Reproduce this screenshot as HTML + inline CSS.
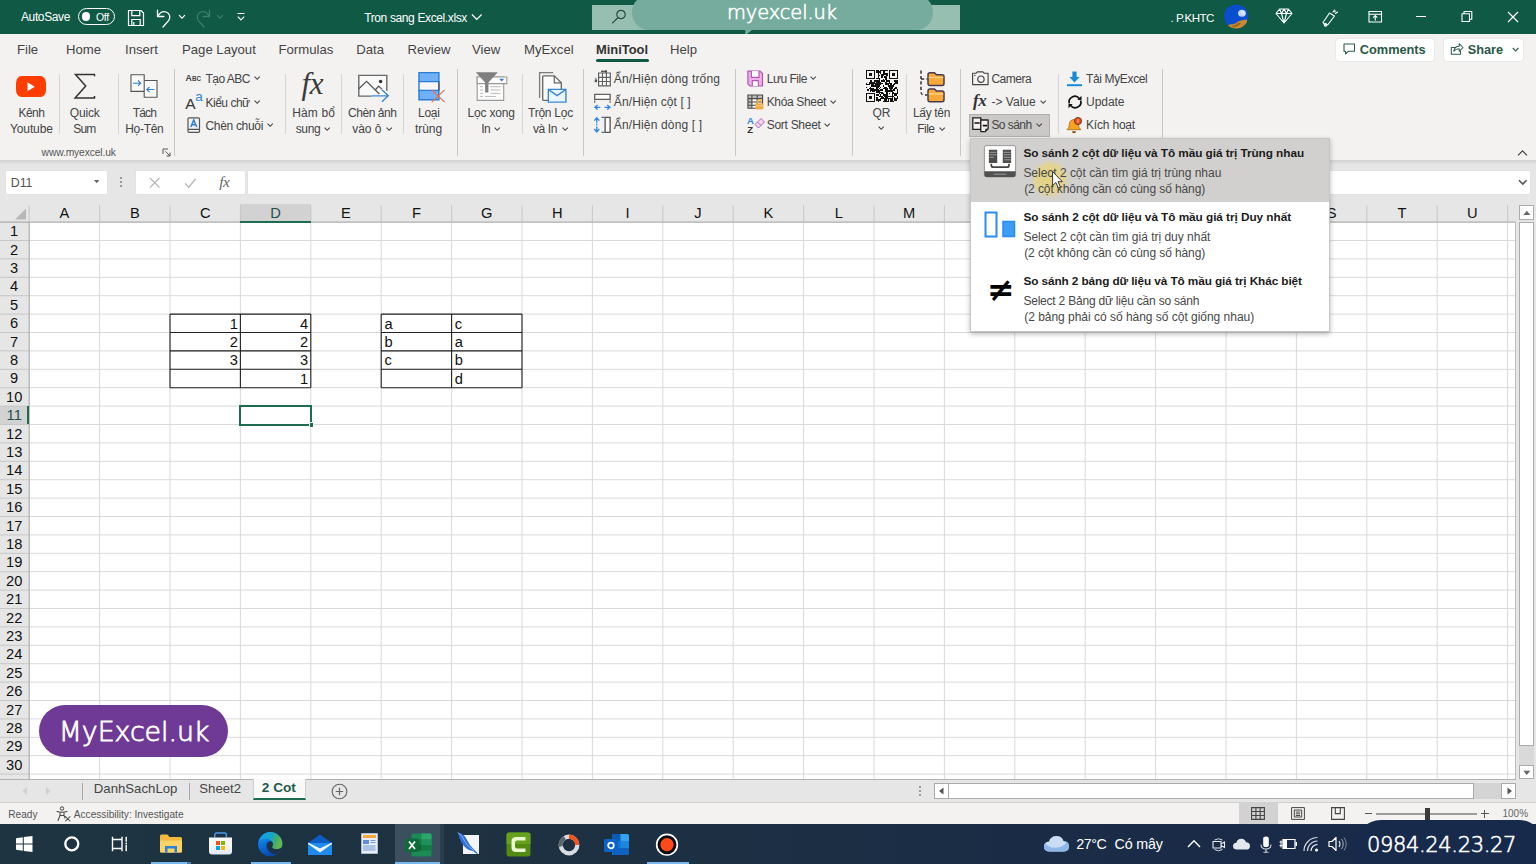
<!DOCTYPE html>
<html lang="vi"><head><meta charset="utf-8"><title>Tron sang Excel.xlsx - Excel</title>
<style>
*{box-sizing:border-box;margin:0;padding:0}
html,body{width:1536px;height:864px;overflow:hidden;background:#fff}
body{font-family:"Liberation Sans",sans-serif;position:relative;color:#333}
.a{position:absolute;white-space:nowrap}
.t{position:absolute;white-space:nowrap;line-height:1}
svg{position:absolute;overflow:visible}
</style></head>
<body>
<div class="a" style="left:0px;top:0px;width:1536px;height:34px;background:#0f5945;"></div>
<div class="t" style="left:21px;top:9.2px;height:16px;line-height:16px;font-size:12px;color:#fff;letter-spacing:-0.380px;">AutoSave</div>
<div class="a" style="left:78px;top:8px;width:37px;height:17px;border:1.2px solid #fff;border-radius:9px"></div>
<div class="a" style="left:81.5px;top:12.3px;width:8.4px;height:8.4px;border-radius:50%;background:#fff"></div>
<div class="t" style="left:96px;top:9.8px;height:14px;line-height:14px;font-size:10.5px;color:#fff;letter-spacing:-0.3px;">Off</div>
<svg style="left:127px;top:9px;" width="18" height="18" viewBox="0 0 18 18"><path d="M1.5 1.5h12.5l2.5 2.5v12.5h-15z M4.8 1.5v5.2h8v-5.2 M4.8 16.5v-6h8.4v6 M6.8 16.5v-3.5" fill="none" stroke="#fff" stroke-width="1.2"/></svg>
<svg style="left:155px;top:8px;" width="18" height="20" viewBox="0 0 18 20"><path d="M2.5 2.2v6.3h6.3 M2.8 8.3c2-3.6 5.3-5.5 8.4-4.3c3.6 1.4 4.7 5.6 2.4 8.600l-5.600 6.4" fill="none" stroke="#fff" stroke-width="1.3" stroke-linecap="round" stroke-linejoin="round"/></svg>
<svg style="left:178px;top:14px;" width="8" height="6" viewBox="0 0 8 6"><path d="M1 1.2l3 3l3-3" fill="none" stroke="#fff" stroke-width="1.2"/></svg>
<svg style="left:194px;top:8px;" width="18" height="20" viewBox="0 0 18 20"><path d="M15.500 2.2v6.3h-6.3 M15.200 8.300c-2-3.600-5.300-5.500-8.400-4.300c-3.600 1.400-4.700 5.600-2.400 8.600l5.600 6.4" fill="none" stroke="#3f7c69" stroke-width="1.3" stroke-linecap="round" stroke-linejoin="round"/></svg>
<svg style="left:216px;top:14px;" width="8" height="6" viewBox="0 0 8 6"><path d="M1 1.2l3 3l3-3" fill="none" stroke="#3f7c69" stroke-width="1.2"/></svg>
<svg style="left:236px;top:12px;" width="10" height="10" viewBox="0 0 10 10"><path d="M1.500 1.500h7 M1.800 4.600l3.200 3.200l3.200-3.200" fill="none" stroke="#fff" stroke-width="1.2"/></svg>
<div class="t" style="left:364.2px;top:9.6px;height:16px;line-height:16px;font-size:12px;color:#fff;letter-spacing:-0.373px;">Tron sang Excel.xlsx</div>
<svg style="left:471px;top:13px;" width="12" height="8" viewBox="0 0 12 8"><path d="M1 1.5l4.800 4.800l4.800-4.800" fill="none" stroke="#fff" stroke-width="1.2"/></svg>
<div class="a" style="left:592px;top:5px;width:368px;height:24.5px;background:#96bfb2;"></div>
<svg style="left:610px;top:8px;" width="18" height="18" viewBox="0 0 18 18"><circle cx="11" cy="6.500" r="4.200" fill="none" stroke="#2d4a42" stroke-width="1.2"/><path d="M8 9.600l-5.800 5.800" stroke="#2d4a42" stroke-width="1.300" fill="none"/></svg>
<div class="a" style="left:632px;top:-5px;width:301px;height:34.5px;border-radius:17px;background:#76ac9d"></div>
<svg style="left:743px;top:28px;" width="12" height="8" viewBox="0 0 12 8"><path d="M2.500 0h9l-9.500 7.500z" fill="#76ac9d"/></svg>
<div class="t" style="left:727px;top:0.0px;height:25px;line-height:25px;font-size:19.4px;color:#fff;font-weight:200;letter-spacing:-0.080px;font-family:'DejaVu Sans','Liberation Sans',sans-serif;-webkit-text-stroke:0.600px #fff;">myexcel.uk</div>
<div class="t" style="left:1170.6px;top:9.8px;height:15px;line-height:15px;font-size:11.6px;color:#fff;letter-spacing:-0.511px;">. P.KHTC</div>
<svg style="left:1224px;top:4.1px;" width="24.4" height="25" viewBox="0 0 24.4 25"><defs><clipPath id="avc"><circle cx="12.200" cy="12.500" r="12.100"/></clipPath></defs><g clip-path="url(#avc)"><rect width="24.400" height="25" fill="#0a4ed0"/><ellipse cx="18" cy="9.200" rx="3.900" ry="3.500" fill="#bcd6f4"/><ellipse cx="18.800" cy="8.800" rx="2.200" ry="2" fill="#dce9fa"/><path d="M3 21.500q3-1.500 6-1.300q3-0.700 5-2.700q3-1.700 9-2v10h-20z" fill="#c98a2e"/><path d="M8 22q4-0.500 7-3.500l2 1q-3 3-8 4z" fill="#9a6418"/></g></svg>
<svg style="left:1275px;top:8.2px;" width="18" height="16" viewBox="0 0 18 16"><path d="M4.500 1h9l3.500 4.500l-8 9.500l-8-9.500z M1 5.500h16 M6.500 5.500l2.500 9.500l2.500-9.500 M4.500 1l2 4.500l2.500-4.500l2.500 4.500l2-4.500" fill="none" stroke="#fff" stroke-width="1.100" stroke-linejoin="round"/></svg>
<svg style="left:1321px;top:8px;" width="18" height="18" viewBox="0 0 18 18"><path d="M2 14.500l6.500-9.500l5 3l-6.500 8.500q-3 1.500-5-2z M4.500 15.500a1.300 1.300 0 1 0 0.100 0 M12 4l1.500-2 M14.500 5.500l2-1.500 M13.800 3.800l0.600-0.600" fill="none" stroke="#fff" stroke-width="1.100" stroke-linejoin="round" stroke-linecap="round"/></svg>
<svg style="left:1368px;top:10px;" width="15" height="13" viewBox="0 0 15 13"><path d="M1 1.500h12.500v10.500h-12.500z M1 4.200h12.500 M7.250 10.500v-4.600 M5.200 7.700l2.050-2.100l2.050 2.100" fill="none" stroke="#fff" stroke-width="1.100"/></svg>
<div class="a" style="left:1416px;top:16px;width:10px;height:1.2px;background:#fff;"></div>
<svg style="left:1461px;top:10px;" width="12" height="13" viewBox="0 0 12 13"><path d="M1 3.800h7.500v7.700h-7.500z M3 3.500v-2h7.800v7.800h-2" fill="none" stroke="#fff" stroke-width="1.100" stroke-linejoin="round"/></svg>
<svg style="left:1507px;top:11px;" width="12" height="12" viewBox="0 0 12 12"><path d="M1 1l10 10 M11 1l-10 10" stroke="#fff" stroke-width="1.200" fill="none"/></svg>
<div class="a" style="left:0px;top:34px;width:1536px;height:126px;background:#f3f2f1;"></div>
<div class="t" style="left:17px;top:41.1px;height:17px;line-height:17px;font-size:13.15px;color:#444;">File</div>
<div class="t" style="left:66px;top:41.1px;height:17px;line-height:17px;font-size:13.15px;color:#444;">Home</div>
<div class="t" style="left:125px;top:41.1px;height:17px;line-height:17px;font-size:13.15px;color:#444;">Insert</div>
<div class="t" style="left:182px;top:41.1px;height:17px;line-height:17px;font-size:13.15px;color:#444;">Page Layout</div>
<div class="t" style="left:278.5px;top:41.1px;height:17px;line-height:17px;font-size:13.15px;color:#444;">Formulas</div>
<div class="t" style="left:356.3px;top:41.1px;height:17px;line-height:17px;font-size:13.15px;color:#444;">Data</div>
<div class="t" style="left:407.5px;top:41.1px;height:17px;line-height:17px;font-size:13.15px;color:#444;">Review</div>
<div class="t" style="left:472px;top:41.1px;height:17px;line-height:17px;font-size:13.15px;color:#444;">View</div>
<div class="t" style="left:524px;top:41.1px;height:17px;line-height:17px;font-size:13.15px;color:#444;">MyExcel</div>
<div class="t" style="left:670px;top:41.1px;height:17px;line-height:17px;font-size:13.15px;color:#444;">Help</div>
<div class="t" style="left:596px;top:41.1px;height:17px;line-height:17px;font-size:12.9px;color:#333;font-weight:bold;">MiniTool</div>
<div class="a" style="left:596px;top:59.3px;width:52.6px;height:3.2px;background:#0f5945;border-radius:1.500px;"></div>
<div class="a" style="left:1336px;top:38.500px;width:98.300px;height:22.500px;background:#fff;border-radius:3px;box-shadow:0 0 1.500px rgba(0,0,0,.18)"></div>
<svg style="left:1343px;top:43px;" width="13" height="12" viewBox="0 0 13 12"><path d="M1 1h10.500v7.300h-6.300l-2.700 2.700v-2.700h-1.500z" fill="none" stroke="#2f5d4f" stroke-width="1.100" stroke-linejoin="round"/></svg>
<div class="t" style="left:1359.8px;top:41.3px;height:17px;line-height:17px;font-size:12.75px;color:#2a5748;font-weight:bold;">Comments</div>
<div class="a" style="left:1443.800px;top:38.500px;width:79.500px;height:22.500px;background:#fff;border-radius:3px;box-shadow:0 0 1.500px rgba(0,0,0,.18)"></div>
<svg style="left:1450px;top:42px;" width="14" height="13" viewBox="0 0 14 13"><path d="M5 5.500h-3.700v6.800h9.200v-3.300 M3.800 9.300c0.400-3.300 2.500-5 5.400-5v-2.600l3.800 3.800l-3.800 3.800v-2.600c-2.500 0-4 0.700-5.400 2.600z" fill="none" stroke="#2f5d4f" stroke-width="1.050" stroke-linejoin="round"/></svg>
<div class="t" style="left:1467.7px;top:41.3px;height:17px;line-height:17px;font-size:12.75px;color:#2a5748;font-weight:bold;">Share</div>
<svg style="left:1512px;top:47px;" width="8" height="6" viewBox="0 0 8 6"><path d="M0.800 1l2.800 2.800l2.800-2.800" fill="none" stroke="#2f5d4f" stroke-width="1.200"/></svg>
<div class="a" style="left:58.5px;top:74px;width:1px;height:59.5px;background:#d6d4d2;"></div>
<div class="a" style="left:117.8px;top:74px;width:1px;height:59.5px;background:#d6d4d2;"></div>
<div class="a" style="left:285.1px;top:74px;width:1px;height:59.5px;background:#d6d4d2;"></div>
<div class="a" style="left:341.1px;top:74px;width:1px;height:59.5px;background:#d6d4d2;"></div>
<div class="a" style="left:402.9px;top:74px;width:1px;height:59.5px;background:#d6d4d2;"></div>
<div class="a" style="left:521.5px;top:74px;width:1px;height:59.5px;background:#d6d4d2;"></div>
<div class="a" style="left:905.8px;top:74px;width:1px;height:59.5px;background:#d6d4d2;"></div>
<div class="a" style="left:1057.8px;top:74px;width:1px;height:59.5px;background:#d6d4d2;"></div>
<div class="a" style="left:173.7px;top:69px;width:1px;height:87px;background:#c9c7c5;"></div>
<div class="a" style="left:456.9px;top:69px;width:1px;height:87px;background:#c9c7c5;"></div>
<div class="a" style="left:582.5px;top:69px;width:1px;height:87px;background:#c9c7c5;"></div>
<div class="a" style="left:735.0px;top:69px;width:1px;height:87px;background:#c9c7c5;"></div>
<div class="a" style="left:851.9px;top:69px;width:1px;height:87px;background:#c9c7c5;"></div>
<div class="a" style="left:960.0px;top:69px;width:1px;height:87px;background:#c9c7c5;"></div>
<div class="a" style="left:1161.7px;top:69px;width:1px;height:87px;background:#c9c7c5;"></div>
<div class="a" style="left:15.800px;top:76px;width:30.400px;height:21.200px;border-radius:5.500px/7px;background:#ff3d00"></div>
<svg style="left:27px;top:81.5px;" width="9" height="10" viewBox="0 0 9 10"><path d="M0.500 0.300l7.300 4.500l-7.300 4.500z" fill="#fff"/></svg>
<div class="t" style="left:18.5px;top:104.9px;height:16px;line-height:16px;font-size:12.0px;color:#444;letter-spacing:-0.532px;">Kênh</div>
<div class="t" style="left:10px;top:120.6px;height:16px;line-height:16px;font-size:12.0px;color:#444;letter-spacing:-0.115px;">Youtube</div>
<svg style="left:74px;top:73px;" width="22" height="26" viewBox="0 0 22 26"><path d="M20.500 3.200v-1.700h-19l10.200 11.400l-10.600 12.100h19.400v-2" fill="none" stroke="#333" stroke-width="1.500" stroke-linejoin="miter"/></svg>
<div class="t" style="left:69.8px;top:104.9px;height:16px;line-height:16px;font-size:12.0px;color:#444;letter-spacing:-0.195px;">Quick</div>
<div class="t" style="left:73.3px;top:120.6px;height:16px;line-height:16px;font-size:12.0px;color:#444;letter-spacing:-0.825px;">Sum</div>
<svg style="left:130px;top:74px;" width="28" height="25" viewBox="0 0 28 25"><path d="M1 0.800h13.200v16.600h-13.200z M14.200 6.500h12.800v16.800h-12.800v-5.900" fill="#fafafa" stroke="#555" stroke-width="1.100"/><path d="M3 9.200h7.500 M8 6.500l2.700 2.700l-2.700 2.700" fill="none" stroke="#2e7fd0" stroke-width="1.100"/><path d="M24.500 15.500h-7.500 M19.500 12.800l-2.700 2.700l2.700 2.700" fill="none" stroke="#2e7fd0" stroke-width="1.100"/></svg>
<div class="t" style="left:132.8px;top:104.9px;height:16px;line-height:16px;font-size:12.0px;color:#444;letter-spacing:-0.870px;">Tách</div>
<div class="t" style="left:125.2px;top:120.6px;height:16px;line-height:16px;font-size:12.0px;color:#444;letter-spacing:-0.286px;">Họ-Tên</div>
<div class="t" style="left:41.6px;top:146.2px;height:13px;line-height:13px;font-size:10.3px;color:#555;letter-spacing:-0.138px;">www.myexcel.uk</div>
<svg style="left:162px;top:148px;" width="9" height="9" viewBox="0 0 9 9"><path d="M1 6v-5h5 M3.300 3.300l4.700 4.700 M8 4.500v3.500h-3.500" fill="none" stroke="#555" stroke-width="1"/></svg>
<div class="t" style="left:185.5px;top:73.1px;height:11px;line-height:11px;font-size:8.8px;color:#444;font-weight:bold;letter-spacing:0.1px;">A<span style="font-size:6.300px">BC</span></div>
<div class="t" style="left:205.5px;top:70.8px;height:16px;line-height:16px;font-size:12.0px;color:#444;letter-spacing:-0.504px;">Tạo ABC</div>
<svg style="left:254.2px;top:76.39999999999999px;" width="6.4" height="4.6" viewBox="0 0 6.4 4.6"><path d="M0.600 0.700l2.600 2.600l2.600-2.600" fill="none" stroke="#444" stroke-width="1.150"/></svg>
<div class="t" style="left:185.3px;top:94.0px;height:20px;line-height:20px;font-size:15.5px;color:#333;">A</div>
<div class="t" style="left:195.3px;top:88.0px;height:18px;line-height:18px;font-size:13.5px;color:#2e86de;">a</div>
<div class="t" style="left:205.5px;top:94.5px;height:16px;line-height:16px;font-size:12.0px;color:#444;letter-spacing:-0.495px;">Kiểu chữ</div>
<svg style="left:254.2px;top:99.8px;" width="6.4" height="4.6" viewBox="0 0 6.4 4.6"><path d="M0.600 0.700l2.600 2.600l2.600-2.600" fill="none" stroke="#444" stroke-width="1.150"/></svg>
<svg style="left:187px;top:117px;" width="14" height="16" viewBox="0 0 14 16"><path d="M2 0.800h9.500q1 0 1 1v12.500q0 1-1 1h-9.500q-1 0-1-1v-12.500q0-1 1-1z M1 12.300h11.500" fill="none" stroke="#555" stroke-width="1.200"/><path d="M3.800 10l2.950-7l2.950 7 M4.800 7.700h3.900" fill="none" stroke="#2e7fd0" stroke-width="1.500"/></svg>
<div class="t" style="left:205.5px;top:117.8px;height:16px;line-height:16px;font-size:12.0px;color:#444;letter-spacing:-0.321px;">Chèn chuỗi</div>
<svg style="left:267.3px;top:123.3px;" width="6.4" height="4.6" viewBox="0 0 6.4 4.6"><path d="M0.600 0.700l2.600 2.600l2.600-2.600" fill="none" stroke="#444" stroke-width="1.150"/></svg>
<div class="t" style="left:301.5px;top:64.3px;height:40px;line-height:40px;font-size:31px;color:#3a3a3a;font-family:'Liberation Serif',serif;font-style:italic;letter-spacing:-0.3px;">fx</div>
<div class="t" style="left:292.2px;top:104.9px;height:16px;line-height:16px;font-size:12.0px;color:#444;letter-spacing:0.130px;">Hàm bổ</div>
<div class="t" style="left:295.7px;top:120.6px;height:16px;line-height:16px;font-size:12.0px;color:#444;letter-spacing:-0.331px;">sung</div>
<svg style="left:324.3px;top:126.7px;" width="6.4" height="4.6" viewBox="0 0 6.4 4.6"><path d="M0.600 0.700l2.600 2.600l2.600-2.600" fill="none" stroke="#444" stroke-width="1.150"/></svg>
<svg style="left:358px;top:74px;" width="32" height="29" viewBox="0 0 32 29"><path d="M0.800 1.400h28v20.700h-28z" fill="#f9f9f9"/><path d="M13.500 22.100h-12.700v-20.700h28v15.300" fill="none" stroke="#686868" stroke-width="1.400"/><path d="M0.800 14.800l7.800-7.500l12.700 12.700 M17.700 15.500l2.900-3.300l3.300 2.900" fill="none" stroke="#555" stroke-width="1.250"/><circle cx="22.600" cy="7.400" r="1.750" fill="#333"/><path d="M13.500 21.800h16.500 M23.900 15.800l6.400 6l-6.400 6" fill="none" stroke="#3b86d6" stroke-width="1.350"/></svg>
<div class="t" style="left:348px;top:104.9px;height:16px;line-height:16px;font-size:12.0px;color:#444;letter-spacing:-0.443px;">Chèn ảnh</div>
<div class="t" style="left:352.3px;top:120.6px;height:16px;line-height:16px;font-size:12.0px;color:#444;letter-spacing:-0.071px;">vào ô</div>
<svg style="left:385.8px;top:126.7px;" width="6.4" height="4.6" viewBox="0 0 6.4 4.6"><path d="M0.600 0.700l2.600 2.600l2.600-2.600" fill="none" stroke="#444" stroke-width="1.150"/></svg>
<svg style="left:418px;top:72px;" width="28" height="31" viewBox="0 0 28 31"><path d="M1 0.600h19.900v9h-19.900z M1 18.400h19.900v9.400h-19.900z" fill="#70b0f7" stroke="#2a7bd4" stroke-width="1.400"/><path d="M1 9.600h19.900v8.800h-19.900z" fill="#f6f6f6" stroke="#2a7bd4" stroke-width="1.400"/><path d="M20.900 10.300v7.600" stroke="#5a5a5a" stroke-width="1.400"/><path d="M13.700 17.800l13 12.300 M26.700 17.800l-13 12.300" stroke="#e8704a" stroke-width="1.150" fill="none"/></svg>
<div class="t" style="left:418px;top:104.9px;height:16px;line-height:16px;font-size:12.0px;color:#444;letter-spacing:-0.297px;">Loại</div>
<div class="t" style="left:415px;top:120.6px;height:16px;line-height:16px;font-size:12.0px;color:#444;letter-spacing:-0.070px;">trùng</div>
<svg style="left:475px;top:71px;" width="33" height="31" viewBox="0 0 33 31"><path d="M2.200 6h26.500v23.400h-26.500z" fill="#fcfcfc" stroke="#9a9a9a" stroke-width="1.100"/><path d="M2.200 6h29.600v6.600h-29.600z" fill="#fcfcfc" stroke="#9a9a9a" stroke-width="1.100"/><path d="M24.200 7.800h5l-2.500 2.700z" fill="#3f78c9"/><path d="M5 15.700h3 M5 19h3 M5 22.400h3 M5 25.400h3 M15.500 15.700h10 M15.500 19h10 M15.500 22.400h10 M10 25.400h11" stroke="#b9b9b9" stroke-width="1" fill="none"/><path d="M0.800 1.200h22l-9.400 10.300v10.100h-3.300v-10.100z" fill="#7f7f7f"/></svg>
<div class="t" style="left:467.5px;top:104.9px;height:16px;line-height:16px;font-size:12.0px;color:#444;letter-spacing:-0.188px;">Lọc xong</div>
<div class="t" style="left:481.3px;top:120.6px;height:16px;line-height:16px;font-size:12.0px;color:#444;letter-spacing:-0.654px;">In</div>
<svg style="left:494.4px;top:126.7px;" width="6.4" height="4.6" viewBox="0 0 6.4 4.6"><path d="M0.600 0.700l2.600 2.600l2.600-2.600" fill="none" stroke="#444" stroke-width="1.150"/></svg>
<svg style="left:538px;top:71px;" width="30" height="33" viewBox="0 0 30 33"><path d="M15.300 1.600h-13.700v25.400" fill="none" stroke="#7c7c7c" stroke-width="1.300"/><path d="M5.700 4.800h10.600l7 7v16.600q0 1-1 1h-16.600q-1 0-1-1v-22.600q0-1 1-1z" fill="#fbfbfb" stroke="#686868" stroke-width="1.350"/><path d="M16.300 4.800v7h7" fill="none" stroke="#686868" stroke-width="1.250"/><path d="M10.300 18.400h17.600v12.700h-17.600z" fill="#eaf6ff" stroke="#3a86d0" stroke-width="1.400"/><path d="M10.300 18.400l8.800 6.200l8.800-6.200" fill="none" stroke="#3a86d0" stroke-width="1.400"/></svg>
<div class="t" style="left:528px;top:104.9px;height:16px;line-height:16px;font-size:12.0px;color:#444;letter-spacing:-0.251px;">Trộn Lọc</div>
<div class="t" style="left:533px;top:120.6px;height:16px;line-height:16px;font-size:12.0px;color:#444;letter-spacing:-0.403px;">và In</div>
<svg style="left:561.6px;top:126.7px;" width="6.4" height="4.6" viewBox="0 0 6.4 4.6"><path d="M0.600 0.700l2.600 2.600l2.600-2.600" fill="none" stroke="#444" stroke-width="1.150"/></svg>
<svg style="left:593px;top:70px;" width="18" height="17" viewBox="0 0 18 17"><path d="M5.600 3h11.700v12.800h-11.700z" fill="#fdfdfd" stroke="#606060" stroke-width="1.200"/><path d="M5.600 7.300h11.700 M5.600 11.500h11.700 M9.500 3v12.800 M13.400 3v12.800" fill="none" stroke="#606060" stroke-width="1.150"/><path d="M8 1.400h6" stroke="#555" stroke-width="1.500"/><path d="M12 0.400h2v2h-2z" fill="#444"/><path d="M1.700 9.400h2.400v2.800h-2.400z" fill="#555"/><path d="M2.200 8.300h1.200" stroke="#555" stroke-width=".9"/></svg>
<div class="t" style="left:613.8px;top:70.6px;height:16px;line-height:16px;font-size:12.0px;color:#444;letter-spacing:0.161px;">Ẩn/Hiện dòng trống</div>
<svg style="left:593px;top:92px;" width="18" height="19" viewBox="0 0 18 19"><path d="M1.700 2.300h15.400v5h-15.400z" fill="#fdfdfd" stroke="#606060" stroke-width="1.300"/><path d="M1.700 8.300v2.600 M17.100 8.300v2.600" stroke="#777" stroke-width="1.200"/><path d="M2 15.300h5.300 M4.600 13l-2.700 2.300l2.700 2.300 M16.800 15.300h-5.300 M14.200 13l2.700 2.300l-2.700 2.300" fill="none" stroke="#2e86de" stroke-width="1.300"/></svg>
<div class="t" style="left:613.8px;top:93.9px;height:16px;line-height:16px;font-size:12.0px;color:#444;letter-spacing:0.109px;">Ẩn/Hiện cột [ ]</div>
<svg style="left:593px;top:116px;" width="18" height="19" viewBox="0 0 18 19"><path d="M12.100 1.300h5v15h-5z" fill="#fdfdfd" stroke="#555" stroke-width="1.350"/><path d="M8.500 1.300h3 M8.500 16.300h3" stroke="#666" stroke-width="1.200"/><path d="M3.800 2.300v4.500 M3.800 10.500v4.800 M1.300 4.700l2.500-2.900l2.500 2.900 M1.300 13l2.500 2.900l2.500-2.900" fill="none" stroke="#2e86de" stroke-width="1.300"/><path d="M3.800 7.600v2" stroke="#2e86de" stroke-width="1.200"/></svg>
<div class="t" style="left:613.8px;top:117.1px;height:16px;line-height:16px;font-size:12.0px;color:#444;letter-spacing:0.146px;">Ẩn/Hiện dòng [ ]</div>
<svg style="left:747px;top:70px;" width="17" height="17" viewBox="0 0 17 17"><path d="M0.900 1.100h12.200l2.400 2.400v12.500h-12.400l-2.200-2.200z" fill="#eab0e8" stroke="#b556b2" stroke-width="1.200" stroke-linejoin="round"/><path d="M4.400 1.100v6.300h7.600v-6.300" fill="#fff" stroke="#b556b2" stroke-width="1.100"/><path d="M5.300 16v-5.400h6v5.400" fill="#fff" stroke="#b556b2" stroke-width="1.100"/></svg>
<div class="t" style="left:766.7px;top:70.5px;height:16px;line-height:16px;font-size:12.0px;color:#444;letter-spacing:-0.482px;">Lưu File</div>
<svg style="left:810.4px;top:76.39999999999999px;" width="6.4" height="4.6" viewBox="0 0 6.4 4.6"><path d="M0.600 0.700l2.600 2.600l2.600-2.600" fill="none" stroke="#444" stroke-width="1.150"/></svg>
<svg style="left:747px;top:93px;" width="18" height="18" viewBox="0 0 18 18"><path d="M0.900 2h14.700v13.300h-14.700z" fill="#fbfbfb"/><path d="M0.900 2h14.700v3.600h-14.700z M0.900 2h4v13.300h-4z" fill="#bdbdbd"/><path d="M0.900 2h14.700v13.300h-14.700z M0.900 5.600h14.700 M0.900 9h14.700 M0.900 12.300h14.700 M4.900 2v13.300 M10.200 2v13.300" fill="none" stroke="#4a4a4a" stroke-width="1.100"/><path d="M8.600 10.400h7.400v6h-7.400z" fill="#f5a93b"/><path d="M10.300 10.400v-1.700a2 2 0 0 1 4 0v1.700" fill="none" stroke="#f5a93b" stroke-width="1.400"/><path d="M8.600 12.800h7.400" stroke="#fbd08a" stroke-width=".9"/></svg>
<div class="t" style="left:766.7px;top:93.8px;height:16px;line-height:16px;font-size:12.0px;color:#444;letter-spacing:-0.342px;">Khóa Sheet</div>
<svg style="left:829.8px;top:99.8px;" width="6.4" height="4.6" viewBox="0 0 6.4 4.6"><path d="M0.600 0.700l2.600 2.600l2.600-2.600" fill="none" stroke="#444" stroke-width="1.150"/></svg>
<div class="t" style="left:747px;top:114.6px;height:12px;line-height:12px;font-size:9.5px;color:#2e86de;font-weight:bold;">A</div>
<div class="t" style="left:747.2px;top:123.8px;height:12px;line-height:12px;font-size:9.5px;color:#333;font-weight:bold;">Z</div>
<svg style="left:754px;top:117px;" width="12" height="12" viewBox="0 0 12 12"><path d="M1 7.500l6-6l3.500 3.500l-6 6z" fill="#f3d4ee" stroke="#b36bb3" stroke-width="1"/><path d="M3.500 5l3.500 3.500" stroke="#b36bb3" stroke-width="1"/></svg>
<div class="t" style="left:766.7px;top:117.1px;height:16px;line-height:16px;font-size:12.0px;color:#444;letter-spacing:-0.280px;">Sort Sheet</div>
<svg style="left:824.3px;top:123.2px;" width="6.4" height="4.6" viewBox="0 0 6.4 4.6"><path d="M0.600 0.700l2.600 2.600l2.600-2.600" fill="none" stroke="#444" stroke-width="1.150"/></svg>
<svg style="left:865.5px;top:70.2px;" width="32" height="32" viewBox="0 0 32 32"><g shape-rendering="crispEdges"><rect x="10.24" y="0.00" width="1.33" height="1.33" fill="#111"/><rect x="11.52" y="0.00" width="1.33" height="1.33" fill="#111"/><rect x="14.08" y="0.00" width="1.33" height="1.33" fill="#111"/><rect x="15.36" y="0.00" width="1.33" height="1.33" fill="#111"/><rect x="16.64" y="0.00" width="1.33" height="1.33" fill="#111"/><rect x="17.92" y="0.00" width="1.33" height="1.33" fill="#111"/><rect x="19.20" y="0.00" width="1.33" height="1.33" fill="#111"/><rect x="20.48" y="0.00" width="1.33" height="1.33" fill="#111"/><rect x="10.24" y="1.28" width="1.33" height="1.33" fill="#111"/><rect x="11.52" y="1.28" width="1.33" height="1.33" fill="#111"/><rect x="12.80" y="1.28" width="1.33" height="1.33" fill="#111"/><rect x="14.08" y="1.28" width="1.33" height="1.33" fill="#111"/><rect x="16.64" y="1.28" width="1.33" height="1.33" fill="#111"/><rect x="17.92" y="1.28" width="1.33" height="1.33" fill="#111"/><rect x="11.52" y="2.56" width="1.33" height="1.33" fill="#111"/><rect x="14.08" y="2.56" width="1.33" height="1.33" fill="#111"/><rect x="16.64" y="2.56" width="1.33" height="1.33" fill="#111"/><rect x="17.92" y="2.56" width="1.33" height="1.33" fill="#111"/><rect x="19.20" y="2.56" width="1.33" height="1.33" fill="#111"/><rect x="20.48" y="2.56" width="1.33" height="1.33" fill="#111"/><rect x="11.52" y="3.84" width="1.33" height="1.33" fill="#111"/><rect x="15.36" y="3.84" width="1.33" height="1.33" fill="#111"/><rect x="16.64" y="3.84" width="1.33" height="1.33" fill="#111"/><rect x="17.92" y="3.84" width="1.33" height="1.33" fill="#111"/><rect x="19.20" y="3.84" width="1.33" height="1.33" fill="#111"/><rect x="20.48" y="3.84" width="1.33" height="1.33" fill="#111"/><rect x="11.52" y="5.12" width="1.33" height="1.33" fill="#111"/><rect x="12.80" y="5.12" width="1.33" height="1.33" fill="#111"/><rect x="15.36" y="5.12" width="1.33" height="1.33" fill="#111"/><rect x="16.64" y="5.12" width="1.33" height="1.33" fill="#111"/><rect x="20.48" y="5.12" width="1.33" height="1.33" fill="#111"/><rect x="11.52" y="6.40" width="1.33" height="1.33" fill="#111"/><rect x="15.36" y="6.40" width="1.33" height="1.33" fill="#111"/><rect x="17.92" y="6.40" width="1.33" height="1.33" fill="#111"/><rect x="19.20" y="6.40" width="1.33" height="1.33" fill="#111"/><rect x="10.24" y="7.68" width="1.33" height="1.33" fill="#111"/><rect x="11.52" y="7.68" width="1.33" height="1.33" fill="#111"/><rect x="12.80" y="7.68" width="1.33" height="1.33" fill="#111"/><rect x="19.20" y="7.68" width="1.33" height="1.33" fill="#111"/><rect x="12.80" y="8.96" width="1.33" height="1.33" fill="#111"/><rect x="16.64" y="8.96" width="1.33" height="1.33" fill="#111"/><rect x="19.20" y="8.96" width="1.33" height="1.33" fill="#111"/><rect x="3.84" y="10.24" width="1.33" height="1.33" fill="#111"/><rect x="5.12" y="10.24" width="1.33" height="1.33" fill="#111"/><rect x="7.68" y="10.24" width="1.33" height="1.33" fill="#111"/><rect x="8.96" y="10.24" width="1.33" height="1.33" fill="#111"/><rect x="10.24" y="10.24" width="1.33" height="1.33" fill="#111"/><rect x="11.52" y="10.24" width="1.33" height="1.33" fill="#111"/><rect x="12.80" y="10.24" width="1.33" height="1.33" fill="#111"/><rect x="15.36" y="10.24" width="1.33" height="1.33" fill="#111"/><rect x="16.64" y="10.24" width="1.33" height="1.33" fill="#111"/><rect x="17.92" y="10.24" width="1.33" height="1.33" fill="#111"/><rect x="20.48" y="10.24" width="1.33" height="1.33" fill="#111"/><rect x="21.76" y="10.24" width="1.33" height="1.33" fill="#111"/><rect x="23.04" y="10.24" width="1.33" height="1.33" fill="#111"/><rect x="28.16" y="10.24" width="1.33" height="1.33" fill="#111"/><rect x="29.44" y="10.24" width="1.33" height="1.33" fill="#111"/><rect x="30.72" y="10.24" width="1.33" height="1.33" fill="#111"/><rect x="2.56" y="11.52" width="1.33" height="1.33" fill="#111"/><rect x="3.84" y="11.52" width="1.33" height="1.33" fill="#111"/><rect x="5.12" y="11.52" width="1.33" height="1.33" fill="#111"/><rect x="6.40" y="11.52" width="1.33" height="1.33" fill="#111"/><rect x="7.68" y="11.52" width="1.33" height="1.33" fill="#111"/><rect x="10.24" y="11.52" width="1.33" height="1.33" fill="#111"/><rect x="11.52" y="11.52" width="1.33" height="1.33" fill="#111"/><rect x="12.80" y="11.52" width="1.33" height="1.33" fill="#111"/><rect x="14.08" y="11.52" width="1.33" height="1.33" fill="#111"/><rect x="19.20" y="11.52" width="1.33" height="1.33" fill="#111"/><rect x="23.04" y="11.52" width="1.33" height="1.33" fill="#111"/><rect x="29.44" y="11.52" width="1.33" height="1.33" fill="#111"/><rect x="30.72" y="11.52" width="1.33" height="1.33" fill="#111"/><rect x="0.00" y="12.80" width="1.33" height="1.33" fill="#111"/><rect x="2.56" y="12.80" width="1.33" height="1.33" fill="#111"/><rect x="3.84" y="12.80" width="1.33" height="1.33" fill="#111"/><rect x="5.12" y="12.80" width="1.33" height="1.33" fill="#111"/><rect x="6.40" y="12.80" width="1.33" height="1.33" fill="#111"/><rect x="7.68" y="12.80" width="1.33" height="1.33" fill="#111"/><rect x="8.96" y="12.80" width="1.33" height="1.33" fill="#111"/><rect x="10.24" y="12.80" width="1.33" height="1.33" fill="#111"/><rect x="11.52" y="12.80" width="1.33" height="1.33" fill="#111"/><rect x="12.80" y="12.80" width="1.33" height="1.33" fill="#111"/><rect x="14.08" y="12.80" width="1.33" height="1.33" fill="#111"/><rect x="15.36" y="12.80" width="1.33" height="1.33" fill="#111"/><rect x="19.20" y="12.80" width="1.33" height="1.33" fill="#111"/><rect x="20.48" y="12.80" width="1.33" height="1.33" fill="#111"/><rect x="21.76" y="12.80" width="1.33" height="1.33" fill="#111"/><rect x="23.04" y="12.80" width="1.33" height="1.33" fill="#111"/><rect x="24.32" y="12.80" width="1.33" height="1.33" fill="#111"/><rect x="28.16" y="12.80" width="1.33" height="1.33" fill="#111"/><rect x="29.44" y="12.80" width="1.33" height="1.33" fill="#111"/><rect x="30.72" y="12.80" width="1.33" height="1.33" fill="#111"/><rect x="0.00" y="14.08" width="1.33" height="1.33" fill="#111"/><rect x="1.28" y="14.08" width="1.33" height="1.33" fill="#111"/><rect x="2.56" y="14.08" width="1.33" height="1.33" fill="#111"/><rect x="5.12" y="14.08" width="1.33" height="1.33" fill="#111"/><rect x="6.40" y="14.08" width="1.33" height="1.33" fill="#111"/><rect x="8.96" y="14.08" width="1.33" height="1.33" fill="#111"/><rect x="10.24" y="14.08" width="1.33" height="1.33" fill="#111"/><rect x="11.52" y="14.08" width="1.33" height="1.33" fill="#111"/><rect x="12.80" y="14.08" width="1.33" height="1.33" fill="#111"/><rect x="14.08" y="14.08" width="1.33" height="1.33" fill="#111"/><rect x="19.20" y="14.08" width="1.33" height="1.33" fill="#111"/><rect x="20.48" y="14.08" width="1.33" height="1.33" fill="#111"/><rect x="21.76" y="14.08" width="1.33" height="1.33" fill="#111"/><rect x="24.32" y="14.08" width="1.33" height="1.33" fill="#111"/><rect x="26.88" y="14.08" width="1.33" height="1.33" fill="#111"/><rect x="28.16" y="14.08" width="1.33" height="1.33" fill="#111"/><rect x="5.12" y="15.36" width="1.33" height="1.33" fill="#111"/><rect x="6.40" y="15.36" width="1.33" height="1.33" fill="#111"/><rect x="7.68" y="15.36" width="1.33" height="1.33" fill="#111"/><rect x="8.96" y="15.36" width="1.33" height="1.33" fill="#111"/><rect x="10.24" y="15.36" width="1.33" height="1.33" fill="#111"/><rect x="11.52" y="15.36" width="1.33" height="1.33" fill="#111"/><rect x="12.80" y="15.36" width="1.33" height="1.33" fill="#111"/><rect x="16.64" y="15.36" width="1.33" height="1.33" fill="#111"/><rect x="21.76" y="15.36" width="1.33" height="1.33" fill="#111"/><rect x="23.04" y="15.36" width="1.33" height="1.33" fill="#111"/><rect x="24.32" y="15.36" width="1.33" height="1.33" fill="#111"/><rect x="25.60" y="15.36" width="1.33" height="1.33" fill="#111"/><rect x="26.88" y="15.36" width="1.33" height="1.33" fill="#111"/><rect x="0.00" y="16.64" width="1.33" height="1.33" fill="#111"/><rect x="3.84" y="16.64" width="1.33" height="1.33" fill="#111"/><rect x="10.24" y="16.64" width="1.33" height="1.33" fill="#111"/><rect x="11.52" y="16.64" width="1.33" height="1.33" fill="#111"/><rect x="14.08" y="16.64" width="1.33" height="1.33" fill="#111"/><rect x="17.92" y="16.64" width="1.33" height="1.33" fill="#111"/><rect x="19.20" y="16.64" width="1.33" height="1.33" fill="#111"/><rect x="23.04" y="16.64" width="1.33" height="1.33" fill="#111"/><rect x="24.32" y="16.64" width="1.33" height="1.33" fill="#111"/><rect x="25.60" y="16.64" width="1.33" height="1.33" fill="#111"/><rect x="29.44" y="16.64" width="1.33" height="1.33" fill="#111"/><rect x="2.56" y="17.92" width="1.33" height="1.33" fill="#111"/><rect x="3.84" y="17.92" width="1.33" height="1.33" fill="#111"/><rect x="5.12" y="17.92" width="1.33" height="1.33" fill="#111"/><rect x="6.40" y="17.92" width="1.33" height="1.33" fill="#111"/><rect x="10.24" y="17.92" width="1.33" height="1.33" fill="#111"/><rect x="12.80" y="17.92" width="1.33" height="1.33" fill="#111"/><rect x="16.64" y="17.92" width="1.33" height="1.33" fill="#111"/><rect x="17.92" y="17.92" width="1.33" height="1.33" fill="#111"/><rect x="19.20" y="17.92" width="1.33" height="1.33" fill="#111"/><rect x="20.48" y="17.92" width="1.33" height="1.33" fill="#111"/><rect x="23.04" y="17.92" width="1.33" height="1.33" fill="#111"/><rect x="24.32" y="17.92" width="1.33" height="1.33" fill="#111"/><rect x="25.60" y="17.92" width="1.33" height="1.33" fill="#111"/><rect x="28.16" y="17.92" width="1.33" height="1.33" fill="#111"/><rect x="29.44" y="17.92" width="1.33" height="1.33" fill="#111"/><rect x="1.28" y="19.20" width="1.33" height="1.33" fill="#111"/><rect x="3.84" y="19.20" width="1.33" height="1.33" fill="#111"/><rect x="5.12" y="19.20" width="1.33" height="1.33" fill="#111"/><rect x="6.40" y="19.20" width="1.33" height="1.33" fill="#111"/><rect x="7.68" y="19.20" width="1.33" height="1.33" fill="#111"/><rect x="8.96" y="19.20" width="1.33" height="1.33" fill="#111"/><rect x="10.24" y="19.20" width="1.33" height="1.33" fill="#111"/><rect x="11.52" y="19.20" width="1.33" height="1.33" fill="#111"/><rect x="14.08" y="19.20" width="1.33" height="1.33" fill="#111"/><rect x="15.36" y="19.20" width="1.33" height="1.33" fill="#111"/><rect x="19.20" y="19.20" width="1.33" height="1.33" fill="#111"/><rect x="20.48" y="19.20" width="1.33" height="1.33" fill="#111"/><rect x="24.32" y="19.20" width="1.33" height="1.33" fill="#111"/><rect x="26.88" y="19.20" width="1.33" height="1.33" fill="#111"/><rect x="28.16" y="19.20" width="1.33" height="1.33" fill="#111"/><rect x="30.72" y="19.20" width="1.33" height="1.33" fill="#111"/><rect x="3.84" y="20.48" width="1.33" height="1.33" fill="#111"/><rect x="6.40" y="20.48" width="1.33" height="1.33" fill="#111"/><rect x="7.68" y="20.48" width="1.33" height="1.33" fill="#111"/><rect x="10.24" y="20.48" width="1.33" height="1.33" fill="#111"/><rect x="11.52" y="20.48" width="1.33" height="1.33" fill="#111"/><rect x="12.80" y="20.48" width="1.33" height="1.33" fill="#111"/><rect x="19.20" y="20.48" width="1.33" height="1.33" fill="#111"/><rect x="30.72" y="20.48" width="1.33" height="1.33" fill="#111"/><rect x="10.24" y="21.76" width="1.33" height="1.33" fill="#111"/><rect x="11.52" y="21.76" width="1.33" height="1.33" fill="#111"/><rect x="12.80" y="21.76" width="1.33" height="1.33" fill="#111"/><rect x="14.08" y="21.76" width="1.33" height="1.33" fill="#111"/><rect x="15.36" y="21.76" width="1.33" height="1.33" fill="#111"/><rect x="26.88" y="21.76" width="1.33" height="1.33" fill="#111"/><rect x="30.72" y="21.76" width="1.33" height="1.33" fill="#111"/><rect x="12.80" y="23.04" width="1.33" height="1.33" fill="#111"/><rect x="15.36" y="23.04" width="1.33" height="1.33" fill="#111"/><rect x="16.64" y="23.04" width="1.33" height="1.33" fill="#111"/><rect x="26.88" y="23.04" width="1.33" height="1.33" fill="#111"/><rect x="28.16" y="23.04" width="1.33" height="1.33" fill="#111"/><rect x="29.44" y="23.04" width="1.33" height="1.33" fill="#111"/><rect x="30.72" y="23.04" width="1.33" height="1.33" fill="#111"/><rect x="10.24" y="24.32" width="1.33" height="1.33" fill="#111"/><rect x="11.52" y="24.32" width="1.33" height="1.33" fill="#111"/><rect x="14.08" y="24.32" width="1.33" height="1.33" fill="#111"/><rect x="16.64" y="24.32" width="1.33" height="1.33" fill="#111"/><rect x="17.92" y="24.32" width="1.33" height="1.33" fill="#111"/><rect x="19.20" y="24.32" width="1.33" height="1.33" fill="#111"/><rect x="28.16" y="24.32" width="1.33" height="1.33" fill="#111"/><rect x="29.44" y="24.32" width="1.33" height="1.33" fill="#111"/><rect x="12.80" y="25.60" width="1.33" height="1.33" fill="#111"/><rect x="14.08" y="25.60" width="1.33" height="1.33" fill="#111"/><rect x="15.36" y="25.60" width="1.33" height="1.33" fill="#111"/><rect x="17.92" y="25.60" width="1.33" height="1.33" fill="#111"/><rect x="19.20" y="25.60" width="1.33" height="1.33" fill="#111"/><rect x="26.88" y="25.60" width="1.33" height="1.33" fill="#111"/><rect x="30.72" y="25.60" width="1.33" height="1.33" fill="#111"/><rect x="10.24" y="26.88" width="1.33" height="1.33" fill="#111"/><rect x="15.36" y="26.88" width="1.33" height="1.33" fill="#111"/><rect x="16.64" y="26.88" width="1.33" height="1.33" fill="#111"/><rect x="19.20" y="26.88" width="1.33" height="1.33" fill="#111"/><rect x="20.48" y="26.88" width="1.33" height="1.33" fill="#111"/><rect x="25.60" y="26.88" width="1.33" height="1.33" fill="#111"/><rect x="28.16" y="26.88" width="1.33" height="1.33" fill="#111"/><rect x="30.72" y="26.88" width="1.33" height="1.33" fill="#111"/><rect x="10.24" y="28.16" width="1.33" height="1.33" fill="#111"/><rect x="14.08" y="28.16" width="1.33" height="1.33" fill="#111"/><rect x="15.36" y="28.16" width="1.33" height="1.33" fill="#111"/><rect x="16.64" y="28.16" width="1.33" height="1.33" fill="#111"/><rect x="17.92" y="28.16" width="1.33" height="1.33" fill="#111"/><rect x="19.20" y="28.16" width="1.33" height="1.33" fill="#111"/><rect x="20.48" y="28.16" width="1.33" height="1.33" fill="#111"/><rect x="21.76" y="28.16" width="1.33" height="1.33" fill="#111"/><rect x="23.04" y="28.16" width="1.33" height="1.33" fill="#111"/><rect x="24.32" y="28.16" width="1.33" height="1.33" fill="#111"/><rect x="25.60" y="28.16" width="1.33" height="1.33" fill="#111"/><rect x="28.16" y="28.16" width="1.33" height="1.33" fill="#111"/><rect x="29.44" y="28.16" width="1.33" height="1.33" fill="#111"/><rect x="30.72" y="28.16" width="1.33" height="1.33" fill="#111"/><rect x="10.24" y="29.44" width="1.33" height="1.33" fill="#111"/><rect x="11.52" y="29.44" width="1.33" height="1.33" fill="#111"/><rect x="12.80" y="29.44" width="1.33" height="1.33" fill="#111"/><rect x="14.08" y="29.44" width="1.33" height="1.33" fill="#111"/><rect x="17.92" y="29.44" width="1.33" height="1.33" fill="#111"/><rect x="19.20" y="29.44" width="1.33" height="1.33" fill="#111"/><rect x="21.76" y="29.44" width="1.33" height="1.33" fill="#111"/><rect x="24.32" y="29.44" width="1.33" height="1.33" fill="#111"/><rect x="25.60" y="29.44" width="1.33" height="1.33" fill="#111"/><rect x="28.16" y="29.44" width="1.33" height="1.33" fill="#111"/><rect x="29.44" y="29.44" width="1.33" height="1.33" fill="#111"/><rect x="11.52" y="30.72" width="1.33" height="1.33" fill="#111"/><rect x="16.64" y="30.72" width="1.33" height="1.33" fill="#111"/><rect x="17.92" y="30.72" width="1.33" height="1.33" fill="#111"/><rect x="19.20" y="30.72" width="1.33" height="1.33" fill="#111"/><rect x="20.48" y="30.72" width="1.33" height="1.33" fill="#111"/><rect x="21.76" y="30.72" width="1.33" height="1.33" fill="#111"/><rect x="24.32" y="30.72" width="1.33" height="1.33" fill="#111"/><rect x="25.60" y="30.72" width="1.33" height="1.33" fill="#111"/><rect x="26.88" y="30.72" width="1.33" height="1.33" fill="#111"/><rect x="0.00" y="0.00" width="8.96" height="8.96" fill="#111"/><rect x="1.28" y="1.28" width="6.40" height="6.40" fill="#f3f2f1"/><rect x="2.56" y="2.56" width="3.84" height="3.84" fill="#111"/><rect x="23.04" y="0.00" width="8.96" height="8.96" fill="#111"/><rect x="24.32" y="1.28" width="6.40" height="6.40" fill="#f3f2f1"/><rect x="25.60" y="2.56" width="3.84" height="3.84" fill="#111"/><rect x="0.00" y="23.04" width="8.96" height="8.96" fill="#111"/><rect x="1.28" y="24.32" width="6.40" height="6.40" fill="#f3f2f1"/><rect x="2.56" y="25.60" width="3.84" height="3.84" fill="#111"/><rect x="20.48" y="20.48" width="6.40" height="6.40" fill="#111"/><rect x="21.76" y="21.76" width="3.84" height="3.84" fill="#f3f2f1"/><rect x="23.04" y="23.04" width="1.28" height="1.28" fill="#111"/></g></svg>
<div class="t" style="left:881.4px;top:104.6px;height:16px;line-height:16px;font-size:12.0px;color:#444;transform:translateX(-50%);">QR</div>
<svg style="left:878.2px;top:125.8px;" width="6.4" height="4.6" viewBox="0 0 6.4 4.6"><path d="M0.600 0.700l2.600 2.600l2.600-2.600" fill="none" stroke="#444" stroke-width="1.150"/></svg>
<svg style="left:918px;top:70px;" width="27" height="33" viewBox="0 0 27 33"><path d="M3 0.500v21q0 3.500 3.500 3.500h3 M3 9h6.500" fill="none" stroke="#333" stroke-width="1.500" stroke-dasharray="3.200 2.200"/><path d="M10 4.7q0-2 2-2h4.500l2 2h5.500q2 0 2 2v6.700q0 2-2 2h-12q-2 0-2-2z" fill="#f9a93a" stroke="#473a50" stroke-width="1.500"/><path d="M10.8 7.5h14.500" stroke="#fbd089" stroke-width="1.400"/><path d="M10 21.099999999999998q0-2 2-2h4.500l2 2h5.500q2 0 2 2v6.700q0 2-2 2h-12q-2 0-2-2z" fill="#f9a93a" stroke="#473a50" stroke-width="1.500"/><path d="M10.8 23.9h14.500" stroke="#fbd089" stroke-width="1.400"/></svg>
<div class="t" style="left:913px;top:104.9px;height:16px;line-height:16px;font-size:12.0px;color:#444;letter-spacing:-0.338px;">Lấy tên</div>
<div class="t" style="left:917.3px;top:120.6px;height:16px;line-height:16px;font-size:12.0px;color:#444;letter-spacing:-0.559px;">File</div>
<svg style="left:939.2px;top:126.7px;" width="6.4" height="4.6" viewBox="0 0 6.4 4.6"><path d="M0.600 0.700l2.600 2.600l2.600-2.600" fill="none" stroke="#444" stroke-width="1.150"/></svg>
<svg style="left:971.5px;top:70.5px;" width="17" height="15" viewBox="0 0 17 15"><path d="M0.600 2.200h3.600l1.200-1.400h5.600l1.200 1.400h3.900v11.400h-15.500z" fill="none" stroke="#444" stroke-width="1.150" stroke-linejoin="round"/><circle cx="8.900" cy="8.200" r="3.200" fill="none" stroke="#444" stroke-width="1.200"/><circle cx="2.900" cy="4.400" r="0.700" fill="#444"/></svg>
<div class="t" style="left:991.4px;top:70.6px;height:16px;line-height:16px;font-size:12.0px;color:#444;letter-spacing:-0.464px;">Camera</div>
<div class="t" style="left:973px;top:89.5px;height:22px;line-height:22px;font-size:17px;color:#333;font-family:'Liberation Serif',serif;font-style:italic;font-weight:bold;letter-spacing:-0.5px;">fx</div>
<div class="t" style="left:991.4px;top:93.9px;height:16px;line-height:16px;font-size:12.0px;color:#444;letter-spacing:0.032px;">-&gt; Value</div>
<svg style="left:1039.5px;top:100.0px;" width="6.4" height="4.6" viewBox="0 0 6.4 4.6"><path d="M0.600 0.700l2.600 2.600l2.600-2.600" fill="none" stroke="#444" stroke-width="1.150"/></svg>
<div class="a" style="left:969px;top:113.600px;width:80.800px;height:23px;background:#cbc9c7;border:1px solid #b3b1af"></div>
<svg style="left:971.5px;top:117px;" width="17" height="16" viewBox="0 0 17 16"><path d="M0.800 0.800h8v11.600h-8z" fill="#f3f2f1" stroke="#222" stroke-width="1.300"/><path d="M8.800 3h7.300v8.800l-2.800 2.800h-4.500z" fill="#f3f2f1" stroke="#222" stroke-width="1.300" stroke-linejoin="round"/><path d="M16.100 11.800l-2.800 2.800v-2.800z" fill="#222"/><path d="M2.500 6h5.200 M10.800 8.700h4.300" stroke="#111" stroke-width="1.700"/></svg>
<div class="t" style="left:991.4px;top:117.2px;height:16px;line-height:16px;font-size:12.0px;color:#444;letter-spacing:-0.548px;">So sánh</div>
<svg style="left:1035.7px;top:123.3px;" width="6.4" height="4.6" viewBox="0 0 6.4 4.6"><path d="M0.600 0.700l2.600 2.600l2.600-2.600" fill="none" stroke="#444" stroke-width="1.150"/></svg>
<svg style="left:1066px;top:69px;" width="17" height="18" viewBox="0 0 17 18"><path d="M6.400 2.400h4.200v5.700h3.100l-5.200 5.400l-5.200-5.400h3.100z" fill="#1a8ad8"/><path d="M1 16.200h15" stroke="#1a8ad8" stroke-width="2"/></svg>
<div class="t" style="left:1086px;top:70.6px;height:16px;line-height:16px;font-size:12.0px;color:#444;letter-spacing:-0.359px;">Tải MyExcel</div>
<svg style="left:1067px;top:94px;" width="16" height="16" viewBox="0 0 16 16"><path d="M2.300 9.500a5.700 5.700 0 0 1 10-5 M13.700 6.500a5.700 5.700 0 0 1-10 5" fill="none" stroke="#111" stroke-width="1.700"/><path d="M14.500 1.800v4.200h-4.200z M1.500 14.200v-4.200h4.200z" fill="#111"/></svg>
<div class="t" style="left:1086px;top:93.9px;height:16px;line-height:16px;font-size:12.0px;color:#444;letter-spacing:-0.033px;">Update</div>
<svg style="left:1065px;top:116px;" width="19" height="19" viewBox="0 0 19 19"><path d="M2 13.700q2.300-1.600 2.300-5.500a4.600 4.600 0 0 1 9.200 0q0 3.900 2.300 5.500z" fill="#f8a41e" stroke="#9a5a0e" stroke-width=".7"/><path d="M7 15.200h4q0 2-2 2t-2-2z" fill="#8a4a0c"/><circle cx="13" cy="5" r="3.600" fill="#e8501f" stroke="#5a2a10" stroke-width=".8"/><path d="M13 3.300v3.400" stroke="#f7c0a0" stroke-width="1"/></svg>
<div class="t" style="left:1086px;top:117.2px;height:16px;line-height:16px;font-size:12.0px;color:#444;letter-spacing:-0.189px;">Kích hoạt</div>
<svg style="left:1517px;top:149px;" width="11" height="8" viewBox="0 0 11 8"><path d="M1 6.300l4.500-4.500l4.500 4.500" fill="none" stroke="#444" stroke-width="1.200"/></svg>
<div class="a" style="left:0;top:159.500px;width:1536px;height:5px;background:linear-gradient(#d2d2d2,#e6e6e6)"></div>
<div class="a" style="left:0px;top:164.5px;width:1536px;height:58px;background:#e6e6e6;"></div>
<div class="a" style="left:5.500px;top:170.700px;width:101px;height:23.500px;background:#fff;border-radius:1px;box-shadow:0 0 1px rgba(0,0,0,.15)"></div>
<div class="t" style="left:10.7px;top:175.0px;height:16px;line-height:16px;font-size:12.4px;color:#555;">D11</div>
<svg style="left:94px;top:180.3px;" width="6" height="4" viewBox="0 0 6 4"><path d="M0 0h5.400l-2.700 3.200z" fill="#666"/></svg>
<div class="a" style="left:120.3px;top:177.3px;width:1.6px;height:1.6px;background:#999;"></div>
<div class="a" style="left:120.3px;top:181.3px;width:1.6px;height:1.6px;background:#999;"></div>
<div class="a" style="left:120.3px;top:185.3px;width:1.6px;height:1.6px;background:#999;"></div>
<div class="a" style="left:136.300px;top:170.700px;width:108.700px;height:23.500px;background:#fff;border-radius:1px;box-shadow:0 0 1px rgba(0,0,0,.15)"></div>
<svg style="left:148.5px;top:177px;" width="12" height="12" viewBox="0 0 12 12"><path d="M1 1l9.500 9.500 M10.500 1l-9.500 9.500" stroke="#b9b9b9" stroke-width="1.300" fill="none"/></svg>
<svg style="left:184px;top:177px;" width="13" height="12" viewBox="0 0 13 12"><path d="M1 6.500l3.700 3.700l7-8.500" stroke="#b9b9b9" stroke-width="1.400" fill="none"/></svg>
<div class="t" style="left:219.3px;top:172.0px;height:20px;line-height:20px;font-size:15.5px;color:#666;font-family:'Liberation Serif',serif;font-style:italic;letter-spacing:-0.5px;">fx</div>
<div class="a" style="left:248.400px;top:170.700px;width:1282px;height:23.500px;background:#fff;border-radius:1px;box-shadow:0 0 1px rgba(0,0,0,.15)"></div>
<svg style="left:1517.5px;top:179px;" width="10" height="7" viewBox="0 0 10 7"><path d="M1 1.200l3.800 3.800l3.800-3.800" fill="none" stroke="#555" stroke-width="1.600"/></svg>
<div class="a" style="left:29.2px;top:222.1px;width:1486.3px;height:557.1px;background:#fff;"></div>
<div class="a" style="left:0px;top:222.1px;width:29.2px;height:557.1px;background:#e6e6e6;"></div>
<div class="a" style="left:240px;top:204.2px;width:71px;height:18px;background:#d2d2d2;"></div>
<div class="a" style="left:0px;top:406.1px;width:29.2px;height:18.4px;background:#d2d2d2;"></div>
<svg style="left:0px;top:0px;" width="1536" height="864" viewBox="0 0 1536 864"><path d="M29.20 222.1V779.200" stroke="#d9d9d9" stroke-width="1"/><path d="M29.20 205.500V222.1" stroke="#c6c6c6" stroke-width="1"/><path d="M99.60 222.1V779.200" stroke="#d9d9d9" stroke-width="1"/><path d="M99.60 205.500V222.1" stroke="#c6c6c6" stroke-width="1"/><path d="M170.00 222.1V779.200" stroke="#d9d9d9" stroke-width="1"/><path d="M170.00 205.500V222.1" stroke="#c6c6c6" stroke-width="1"/><path d="M240.40 222.1V779.200" stroke="#d9d9d9" stroke-width="1"/><path d="M240.40 205.500V222.1" stroke="#c6c6c6" stroke-width="1"/><path d="M310.80 222.1V779.200" stroke="#d9d9d9" stroke-width="1"/><path d="M310.80 205.500V222.1" stroke="#c6c6c6" stroke-width="1"/><path d="M381.20 222.1V779.200" stroke="#d9d9d9" stroke-width="1"/><path d="M381.20 205.500V222.1" stroke="#c6c6c6" stroke-width="1"/><path d="M451.60 222.1V779.200" stroke="#d9d9d9" stroke-width="1"/><path d="M451.60 205.500V222.1" stroke="#c6c6c6" stroke-width="1"/><path d="M522.00 222.1V779.200" stroke="#d9d9d9" stroke-width="1"/><path d="M522.00 205.500V222.1" stroke="#c6c6c6" stroke-width="1"/><path d="M592.40 222.1V779.200" stroke="#d9d9d9" stroke-width="1"/><path d="M592.40 205.500V222.1" stroke="#c6c6c6" stroke-width="1"/><path d="M662.80 222.1V779.200" stroke="#d9d9d9" stroke-width="1"/><path d="M662.80 205.500V222.1" stroke="#c6c6c6" stroke-width="1"/><path d="M733.20 222.1V779.200" stroke="#d9d9d9" stroke-width="1"/><path d="M733.20 205.500V222.1" stroke="#c6c6c6" stroke-width="1"/><path d="M803.60 222.1V779.200" stroke="#d9d9d9" stroke-width="1"/><path d="M803.60 205.500V222.1" stroke="#c6c6c6" stroke-width="1"/><path d="M874.00 222.1V779.200" stroke="#d9d9d9" stroke-width="1"/><path d="M874.00 205.500V222.1" stroke="#c6c6c6" stroke-width="1"/><path d="M944.40 222.1V779.200" stroke="#d9d9d9" stroke-width="1"/><path d="M944.40 205.500V222.1" stroke="#c6c6c6" stroke-width="1"/><path d="M1014.80 222.1V779.200" stroke="#d9d9d9" stroke-width="1"/><path d="M1014.80 205.500V222.1" stroke="#c6c6c6" stroke-width="1"/><path d="M1085.20 222.1V779.200" stroke="#d9d9d9" stroke-width="1"/><path d="M1085.20 205.500V222.1" stroke="#c6c6c6" stroke-width="1"/><path d="M1155.60 222.1V779.200" stroke="#d9d9d9" stroke-width="1"/><path d="M1155.60 205.500V222.1" stroke="#c6c6c6" stroke-width="1"/><path d="M1226.00 222.1V779.200" stroke="#d9d9d9" stroke-width="1"/><path d="M1226.00 205.500V222.1" stroke="#c6c6c6" stroke-width="1"/><path d="M1296.40 222.1V779.200" stroke="#d9d9d9" stroke-width="1"/><path d="M1296.40 205.500V222.1" stroke="#c6c6c6" stroke-width="1"/><path d="M1366.80 222.1V779.200" stroke="#d9d9d9" stroke-width="1"/><path d="M1366.80 205.500V222.1" stroke="#c6c6c6" stroke-width="1"/><path d="M1437.20 222.1V779.200" stroke="#d9d9d9" stroke-width="1"/><path d="M1437.20 205.500V222.1" stroke="#c6c6c6" stroke-width="1"/><path d="M1507.60 222.1V779.200" stroke="#d9d9d9" stroke-width="1"/><path d="M1507.60 205.500V222.1" stroke="#c6c6c6" stroke-width="1"/><path d="M29.2 222.10H1515.500" stroke="#d9d9d9" stroke-width="1"/><path d="M0 222.10H29.2" stroke="#c6c6c6" stroke-width="1"/><path d="M29.2 240.50H1515.500" stroke="#d9d9d9" stroke-width="1"/><path d="M0 240.50H29.2" stroke="#c6c6c6" stroke-width="1"/><path d="M29.2 258.90H1515.500" stroke="#d9d9d9" stroke-width="1"/><path d="M0 258.90H29.2" stroke="#c6c6c6" stroke-width="1"/><path d="M29.2 277.30H1515.500" stroke="#d9d9d9" stroke-width="1"/><path d="M0 277.30H29.2" stroke="#c6c6c6" stroke-width="1"/><path d="M29.2 295.70H1515.500" stroke="#d9d9d9" stroke-width="1"/><path d="M0 295.70H29.2" stroke="#c6c6c6" stroke-width="1"/><path d="M29.2 314.10H1515.500" stroke="#d9d9d9" stroke-width="1"/><path d="M0 314.10H29.2" stroke="#c6c6c6" stroke-width="1"/><path d="M29.2 332.50H1515.500" stroke="#d9d9d9" stroke-width="1"/><path d="M0 332.50H29.2" stroke="#c6c6c6" stroke-width="1"/><path d="M29.2 350.90H1515.500" stroke="#d9d9d9" stroke-width="1"/><path d="M0 350.90H29.2" stroke="#c6c6c6" stroke-width="1"/><path d="M29.2 369.30H1515.500" stroke="#d9d9d9" stroke-width="1"/><path d="M0 369.30H29.2" stroke="#c6c6c6" stroke-width="1"/><path d="M29.2 387.70H1515.500" stroke="#d9d9d9" stroke-width="1"/><path d="M0 387.70H29.2" stroke="#c6c6c6" stroke-width="1"/><path d="M29.2 406.10H1515.500" stroke="#d9d9d9" stroke-width="1"/><path d="M0 406.10H29.2" stroke="#c6c6c6" stroke-width="1"/><path d="M29.2 424.50H1515.500" stroke="#d9d9d9" stroke-width="1"/><path d="M0 424.50H29.2" stroke="#c6c6c6" stroke-width="1"/><path d="M29.2 442.90H1515.500" stroke="#d9d9d9" stroke-width="1"/><path d="M0 442.90H29.2" stroke="#c6c6c6" stroke-width="1"/><path d="M29.2 461.30H1515.500" stroke="#d9d9d9" stroke-width="1"/><path d="M0 461.30H29.2" stroke="#c6c6c6" stroke-width="1"/><path d="M29.2 479.70H1515.500" stroke="#d9d9d9" stroke-width="1"/><path d="M0 479.70H29.2" stroke="#c6c6c6" stroke-width="1"/><path d="M29.2 498.10H1515.500" stroke="#d9d9d9" stroke-width="1"/><path d="M0 498.10H29.2" stroke="#c6c6c6" stroke-width="1"/><path d="M29.2 516.50H1515.500" stroke="#d9d9d9" stroke-width="1"/><path d="M0 516.50H29.2" stroke="#c6c6c6" stroke-width="1"/><path d="M29.2 534.90H1515.500" stroke="#d9d9d9" stroke-width="1"/><path d="M0 534.90H29.2" stroke="#c6c6c6" stroke-width="1"/><path d="M29.2 553.30H1515.500" stroke="#d9d9d9" stroke-width="1"/><path d="M0 553.30H29.2" stroke="#c6c6c6" stroke-width="1"/><path d="M29.2 571.70H1515.500" stroke="#d9d9d9" stroke-width="1"/><path d="M0 571.70H29.2" stroke="#c6c6c6" stroke-width="1"/><path d="M29.2 590.10H1515.500" stroke="#d9d9d9" stroke-width="1"/><path d="M0 590.10H29.2" stroke="#c6c6c6" stroke-width="1"/><path d="M29.2 608.50H1515.500" stroke="#d9d9d9" stroke-width="1"/><path d="M0 608.50H29.2" stroke="#c6c6c6" stroke-width="1"/><path d="M29.2 626.90H1515.500" stroke="#d9d9d9" stroke-width="1"/><path d="M0 626.90H29.2" stroke="#c6c6c6" stroke-width="1"/><path d="M29.2 645.30H1515.500" stroke="#d9d9d9" stroke-width="1"/><path d="M0 645.30H29.2" stroke="#c6c6c6" stroke-width="1"/><path d="M29.2 663.70H1515.500" stroke="#d9d9d9" stroke-width="1"/><path d="M0 663.70H29.2" stroke="#c6c6c6" stroke-width="1"/><path d="M29.2 682.10H1515.500" stroke="#d9d9d9" stroke-width="1"/><path d="M0 682.10H29.2" stroke="#c6c6c6" stroke-width="1"/><path d="M29.2 700.50H1515.500" stroke="#d9d9d9" stroke-width="1"/><path d="M0 700.50H29.2" stroke="#c6c6c6" stroke-width="1"/><path d="M29.2 718.90H1515.500" stroke="#d9d9d9" stroke-width="1"/><path d="M0 718.90H29.2" stroke="#c6c6c6" stroke-width="1"/><path d="M29.2 737.30H1515.500" stroke="#d9d9d9" stroke-width="1"/><path d="M0 737.30H29.2" stroke="#c6c6c6" stroke-width="1"/><path d="M29.2 755.70H1515.500" stroke="#d9d9d9" stroke-width="1"/><path d="M0 755.70H29.2" stroke="#c6c6c6" stroke-width="1"/><path d="M29.2 774.10H1515.500" stroke="#d9d9d9" stroke-width="1"/><path d="M0 774.10H29.2" stroke="#c6c6c6" stroke-width="1"/><path d="M0 222.1H1515.500" stroke="#b4b4b4" stroke-width="1.200"/><path d="M29.2 222.1V779.200" stroke="#b4b4b4" stroke-width="1.200"/><path d="M26 208.500v11h-11z" fill="#b8b8b8"/></svg>
<div class="a" style="left:240px;top:220.6px;width:71px;height:2.1px;background:#1e6b52;"></div>
<div class="a" style="left:27.0px;top:406.1px;width:2.2px;height:18.4px;background:#1e6b52;"></div>
<div class="t" style="left:64.4px;top:203.8px;height:19px;line-height:19px;font-size:14.67px;color:#111;transform:translateX(-50%);">A</div>
<div class="t" style="left:134.8px;top:203.8px;height:19px;line-height:19px;font-size:14.67px;color:#111;transform:translateX(-50%);">B</div>
<div class="t" style="left:205.2px;top:203.8px;height:19px;line-height:19px;font-size:14.67px;color:#111;transform:translateX(-50%);">C</div>
<div class="t" style="left:275.6px;top:203.8px;height:19px;line-height:19px;font-size:14.67px;color:#24504a;transform:translateX(-50%);">D</div>
<div class="t" style="left:346.0px;top:203.8px;height:19px;line-height:19px;font-size:14.67px;color:#111;transform:translateX(-50%);">E</div>
<div class="t" style="left:416.40000000000003px;top:203.8px;height:19px;line-height:19px;font-size:14.67px;color:#111;transform:translateX(-50%);">F</div>
<div class="t" style="left:486.8px;top:203.8px;height:19px;line-height:19px;font-size:14.67px;color:#111;transform:translateX(-50%);">G</div>
<div class="t" style="left:557.2px;top:203.8px;height:19px;line-height:19px;font-size:14.67px;color:#111;transform:translateX(-50%);">H</div>
<div class="t" style="left:627.6000000000001px;top:203.8px;height:19px;line-height:19px;font-size:14.67px;color:#111;transform:translateX(-50%);">I</div>
<div class="t" style="left:698.0000000000001px;top:203.8px;height:19px;line-height:19px;font-size:14.67px;color:#111;transform:translateX(-50%);">J</div>
<div class="t" style="left:768.4000000000001px;top:203.8px;height:19px;line-height:19px;font-size:14.67px;color:#111;transform:translateX(-50%);">K</div>
<div class="t" style="left:838.8000000000001px;top:203.8px;height:19px;line-height:19px;font-size:14.67px;color:#111;transform:translateX(-50%);">L</div>
<div class="t" style="left:909.2000000000002px;top:203.8px;height:19px;line-height:19px;font-size:14.67px;color:#111;transform:translateX(-50%);">M</div>
<div class="t" style="left:979.6000000000001px;top:203.8px;height:19px;line-height:19px;font-size:14.67px;color:#111;transform:translateX(-50%);">N</div>
<div class="t" style="left:1050.0px;top:203.8px;height:19px;line-height:19px;font-size:14.67px;color:#111;transform:translateX(-50%);">O</div>
<div class="t" style="left:1120.4px;top:203.8px;height:19px;line-height:19px;font-size:14.67px;color:#111;transform:translateX(-50%);">P</div>
<div class="t" style="left:1190.8000000000002px;top:203.8px;height:19px;line-height:19px;font-size:14.67px;color:#111;transform:translateX(-50%);">Q</div>
<div class="t" style="left:1261.2px;top:203.8px;height:19px;line-height:19px;font-size:14.67px;color:#111;transform:translateX(-50%);">R</div>
<div class="t" style="left:1331.6000000000001px;top:203.8px;height:19px;line-height:19px;font-size:14.67px;color:#111;transform:translateX(-50%);">S</div>
<div class="t" style="left:1402.0000000000002px;top:203.8px;height:19px;line-height:19px;font-size:14.67px;color:#111;transform:translateX(-50%);">T</div>
<div class="t" style="left:1472.4px;top:203.8px;height:19px;line-height:19px;font-size:14.67px;color:#111;transform:translateX(-50%);">U</div>
<div class="t" style="left:14.2px;top:222.2px;height:19px;line-height:19px;font-size:14.67px;color:#111;transform:translateX(-50%);">1</div>
<div class="t" style="left:14.2px;top:240.6px;height:19px;line-height:19px;font-size:14.67px;color:#111;transform:translateX(-50%);">2</div>
<div class="t" style="left:14.2px;top:259.0px;height:19px;line-height:19px;font-size:14.67px;color:#111;transform:translateX(-50%);">3</div>
<div class="t" style="left:14.2px;top:277.4px;height:19px;line-height:19px;font-size:14.67px;color:#111;transform:translateX(-50%);">4</div>
<div class="t" style="left:14.2px;top:295.8px;height:19px;line-height:19px;font-size:14.67px;color:#111;transform:translateX(-50%);">5</div>
<div class="t" style="left:14.2px;top:314.2px;height:19px;line-height:19px;font-size:14.67px;color:#111;transform:translateX(-50%);">6</div>
<div class="t" style="left:14.2px;top:332.6px;height:19px;line-height:19px;font-size:14.67px;color:#111;transform:translateX(-50%);">7</div>
<div class="t" style="left:14.2px;top:351.0px;height:19px;line-height:19px;font-size:14.67px;color:#111;transform:translateX(-50%);">8</div>
<div class="t" style="left:14.2px;top:369.4px;height:19px;line-height:19px;font-size:14.67px;color:#111;transform:translateX(-50%);">9</div>
<div class="t" style="left:14.2px;top:387.8px;height:19px;line-height:19px;font-size:14.67px;color:#111;transform:translateX(-50%);">10</div>
<div class="t" style="left:14.2px;top:406.2px;height:19px;line-height:19px;font-size:14.67px;color:#24504a;transform:translateX(-50%);">11</div>
<div class="t" style="left:14.2px;top:424.6px;height:19px;line-height:19px;font-size:14.67px;color:#111;transform:translateX(-50%);">12</div>
<div class="t" style="left:14.2px;top:443.0px;height:19px;line-height:19px;font-size:14.67px;color:#111;transform:translateX(-50%);">13</div>
<div class="t" style="left:14.2px;top:461.4px;height:19px;line-height:19px;font-size:14.67px;color:#111;transform:translateX(-50%);">14</div>
<div class="t" style="left:14.2px;top:479.8px;height:19px;line-height:19px;font-size:14.67px;color:#111;transform:translateX(-50%);">15</div>
<div class="t" style="left:14.2px;top:498.2px;height:19px;line-height:19px;font-size:14.67px;color:#111;transform:translateX(-50%);">16</div>
<div class="t" style="left:14.2px;top:516.6px;height:19px;line-height:19px;font-size:14.67px;color:#111;transform:translateX(-50%);">17</div>
<div class="t" style="left:14.2px;top:535.0px;height:19px;line-height:19px;font-size:14.67px;color:#111;transform:translateX(-50%);">18</div>
<div class="t" style="left:14.2px;top:553.4px;height:19px;line-height:19px;font-size:14.67px;color:#111;transform:translateX(-50%);">19</div>
<div class="t" style="left:14.2px;top:571.8px;height:19px;line-height:19px;font-size:14.67px;color:#111;transform:translateX(-50%);">20</div>
<div class="t" style="left:14.2px;top:590.2px;height:19px;line-height:19px;font-size:14.67px;color:#111;transform:translateX(-50%);">21</div>
<div class="t" style="left:14.2px;top:608.6px;height:19px;line-height:19px;font-size:14.67px;color:#111;transform:translateX(-50%);">22</div>
<div class="t" style="left:14.2px;top:627.0px;height:19px;line-height:19px;font-size:14.67px;color:#111;transform:translateX(-50%);">23</div>
<div class="t" style="left:14.2px;top:645.4px;height:19px;line-height:19px;font-size:14.67px;color:#111;transform:translateX(-50%);">24</div>
<div class="t" style="left:14.2px;top:663.8px;height:19px;line-height:19px;font-size:14.67px;color:#111;transform:translateX(-50%);">25</div>
<div class="t" style="left:14.2px;top:682.2px;height:19px;line-height:19px;font-size:14.67px;color:#111;transform:translateX(-50%);">26</div>
<div class="t" style="left:14.2px;top:700.6px;height:19px;line-height:19px;font-size:14.67px;color:#111;transform:translateX(-50%);">27</div>
<div class="t" style="left:14.2px;top:719.0px;height:19px;line-height:19px;font-size:14.67px;color:#111;transform:translateX(-50%);">28</div>
<div class="t" style="left:14.2px;top:737.4px;height:19px;line-height:19px;font-size:14.67px;color:#111;transform:translateX(-50%);">29</div>
<div class="t" style="left:14.2px;top:755.8px;height:19px;line-height:19px;font-size:14.67px;color:#111;transform:translateX(-50%);">30</div>
<div class="a" style="left:0;top:775.1px;width:29.2px;height:4.1px;overflow:hidden"><div class="t" style="left:6px;top:2px;font-size:14.670px;color:#222">31</div></div>
<svg style="left:0px;top:0px;" width="1536" height="864" viewBox="0 0 1536 864"><path d="M170.00 314.10v73.60" stroke="#222" stroke-width="1.100"/><path d="M240.40 314.10v73.60" stroke="#222" stroke-width="1.100"/><path d="M310.80 314.10v73.60" stroke="#222" stroke-width="1.100"/><path d="M170.00 314.10h140.80" stroke="#222" stroke-width="1.100"/><path d="M170.00 332.50h140.80" stroke="#222" stroke-width="1.100"/><path d="M170.00 350.90h140.80" stroke="#222" stroke-width="1.100"/><path d="M170.00 369.30h140.80" stroke="#222" stroke-width="1.100"/><path d="M170.00 387.70h140.80" stroke="#222" stroke-width="1.100"/></svg>
<div class="t" style="left:237.8px;top:314.6px;height:19px;line-height:19px;font-size:14.67px;color:#111;transform:translateX(-100%);">1</div>
<div class="t" style="left:308.2px;top:314.6px;height:19px;line-height:19px;font-size:14.67px;color:#111;transform:translateX(-100%);">4</div>
<div class="t" style="left:237.8px;top:333.0px;height:19px;line-height:19px;font-size:14.67px;color:#111;transform:translateX(-100%);">2</div>
<div class="t" style="left:308.2px;top:333.0px;height:19px;line-height:19px;font-size:14.67px;color:#111;transform:translateX(-100%);">2</div>
<div class="t" style="left:237.8px;top:351.4px;height:19px;line-height:19px;font-size:14.67px;color:#111;transform:translateX(-100%);">3</div>
<div class="t" style="left:308.2px;top:351.4px;height:19px;line-height:19px;font-size:14.67px;color:#111;transform:translateX(-100%);">3</div>
<div class="t" style="left:308.2px;top:369.8px;height:19px;line-height:19px;font-size:14.67px;color:#111;transform:translateX(-100%);">1</div>
<svg style="left:0px;top:0px;" width="1536" height="864" viewBox="0 0 1536 864"><path d="M381.20 314.10v73.60" stroke="#222" stroke-width="1.100"/><path d="M451.60 314.10v73.60" stroke="#222" stroke-width="1.100"/><path d="M522.00 314.10v73.60" stroke="#222" stroke-width="1.100"/><path d="M381.20 314.10h140.80" stroke="#222" stroke-width="1.100"/><path d="M381.20 332.50h140.80" stroke="#222" stroke-width="1.100"/><path d="M381.20 350.90h140.80" stroke="#222" stroke-width="1.100"/><path d="M381.20 369.30h140.80" stroke="#222" stroke-width="1.100"/><path d="M381.20 387.70h140.80" stroke="#222" stroke-width="1.100"/></svg>
<div class="t" style="left:384.4px;top:314.6px;height:19px;line-height:19px;font-size:14.67px;color:#111;">a</div>
<div class="t" style="left:454.8px;top:314.6px;height:19px;line-height:19px;font-size:14.67px;color:#111;">c</div>
<div class="t" style="left:384.4px;top:333.0px;height:19px;line-height:19px;font-size:14.67px;color:#111;">b</div>
<div class="t" style="left:454.8px;top:333.0px;height:19px;line-height:19px;font-size:14.67px;color:#111;">a</div>
<div class="t" style="left:384.4px;top:351.4px;height:19px;line-height:19px;font-size:14.67px;color:#111;">c</div>
<div class="t" style="left:454.8px;top:351.4px;height:19px;line-height:19px;font-size:14.67px;color:#111;">b</div>
<div class="t" style="left:454.8px;top:369.8px;height:19px;line-height:19px;font-size:14.67px;color:#111;">d</div>
<div class="a" style="left:239.1px;top:404.8px;width:73.0px;height:21.0px;border:2.200px solid #1e6b52"></div>
<div class="a" style="left:308.6px;top:422.3px;width:5.4px;height:5.4px;background:#1e6b52;border:1px solid #fff;"></div>
<div class="a" style="left:38.800px;top:704.600px;width:189.500px;height:52.200px;border-radius:26.100px;background:#6f3a96"></div>
<div class="t" style="left:58.8px;top:715.1px;height:34px;line-height:34px;font-size:26.8px;color:#fff;font-weight:200;letter-spacing:-0.050px;font-family:'DejaVu Sans','Liberation Sans',sans-serif;-webkit-text-stroke:0.800px #fff;">MyExcel.uk</div>
<div class="a" style="left:1515.5px;top:204px;width:20.5px;height:576px;background:#e6e6e6;"></div>
<div class="a" style="left:1515px;top:222.1px;width:1px;height:557.1px;background:#bdbdbd;"></div>
<div class="a" style="left:1519px;top:746px;width:14.5px;height:19px;background:#d9d9d9;"></div>
<div class="a" style="left:1519px;top:205px;width:14.500px;height:15px;background:#fff;border:1px solid #ababab"></div>
<svg style="left:1522.5px;top:209.5px;" width="8" height="6" viewBox="0 0 8 6"><path d="M0.300 5l3.500-4.300l3.500 4.300z" fill="#666"/></svg>
<div class="a" style="left:1519px;top:222px;width:14.500px;height:524px;background:#fff;border:1px solid #ababab"></div>
<div class="a" style="left:1519px;top:764.800px;width:14.500px;height:14.600px;background:#fff;border:1px solid #ababab"></div>
<svg style="left:1522.5px;top:769.5px;" width="8" height="6" viewBox="0 0 8 6"><path d="M0.300 0.800l3.500 4.300l3.500-4.300z" fill="#666"/></svg>
<div class="a" style="left:0px;top:779.2px;width:1536px;height:22.6px;background:#e6e6e6;"></div>
<div class="a" style="left:0px;top:778.7px;width:1515.5px;height:1.1px;background:#b0b0b0;"></div>
<svg style="left:20.5px;top:786px;" width="8" height="10" viewBox="0 0 8 10"><path d="M6 1l-4.500 4l4.500 4z" fill="#d0d0d0"/></svg>
<svg style="left:43.5px;top:786px;" width="8" height="10" viewBox="0 0 8 10"><path d="M2 1l4.500 4l-4.500 4z" fill="#d0d0d0"/></svg>
<div class="a" style="left:82px;top:782.5px;width:1.2px;height:17px;background:#a8a8a8;"></div>
<div class="t" style="left:93.8px;top:780.1px;height:17px;line-height:17px;font-size:13.2px;color:#444;">DanhSachLop</div>
<div class="a" style="left:188.8px;top:782.5px;width:1.2px;height:17px;background:#a8a8a8;"></div>
<div class="t" style="left:199.3px;top:780.1px;height:17px;line-height:17px;font-size:13.2px;color:#444;">Sheet2</div>
<div class="a" style="left:252.500px;top:778.500px;width:53px;height:21.500px;background:#f9f9f9;border-bottom:2.200px solid #1e6b52;border-left:1px solid #d0d0d0;border-right:1px solid #d0d0d0"></div>
<div class="t" style="left:261.8px;top:779.4px;height:18px;line-height:18px;font-size:13.6px;color:#1e5c48;font-weight:bold;">2 Cot</div>
<svg style="left:331px;top:782.5px;" width="17" height="17" viewBox="0 0 17 17"><circle cx="8.500" cy="8.500" r="7.300" fill="none" stroke="#666" stroke-width="1.100"/><path d="M4.800 8.500h7.400 M8.500 4.800v7.400" stroke="#666" stroke-width="1.200"/></svg>
<div class="a" style="left:919.3px;top:786px;width:1.6px;height:1.6px;background:#9a9a9a;"></div>
<div class="a" style="left:919.3px;top:790px;width:1.6px;height:1.6px;background:#9a9a9a;"></div>
<div class="a" style="left:919.3px;top:794px;width:1.6px;height:1.6px;background:#9a9a9a;"></div>
<div class="a" style="left:934px;top:783px;width:14.500px;height:15.500px;background:#fff;border:1px solid #ababab"></div>
<svg style="left:938px;top:787px;" width="7" height="8" viewBox="0 0 7 8"><path d="M5.500 0.500l-4.500 3.500l4.500 3.500z" fill="#555"/></svg>
<div class="a" style="left:948px;top:783px;width:526px;height:15.500px;background:#fff;border:1px solid #ababab"></div>
<div class="a" style="left:1474px;top:783px;width:27px;height:15.5px;background:#d4d4d4;"></div>
<div class="a" style="left:1501px;top:783px;width:15px;height:15.500px;background:#fff;border:1px solid #ababab"></div>
<svg style="left:1505.5px;top:787px;" width="7" height="8" viewBox="0 0 7 8"><path d="M1.500 0.500l4.500 3.500l-4.500 3.500z" fill="#555"/></svg>
<div class="a" style="left:0px;top:801.8px;width:1536px;height:22.4px;background:#f3f2f1;border-top:1px solid #d0d0d0;"></div>
<div class="t" style="left:8.3px;top:807.5px;height:13px;line-height:13px;font-size:10.1px;color:#555;">Ready</div>
<svg style="left:56px;top:806px;" width="15" height="16" viewBox="0 0 15 16"><circle cx="6" cy="2.500" r="1.700" fill="none" stroke="#444" stroke-width="1"/><path d="M1 5.500q5 1.600 10 0 M4 6.500v3l-2 5 M8 6.500v3l1 2.500 M4 9.500h4 M9.500 10.500l4.500 4.500 M14 10.500l-4.500 4.500" fill="none" stroke="#444" stroke-width="1.050" stroke-linecap="round"/></svg>
<div class="t" style="left:73.8px;top:807.5px;height:13px;line-height:13px;font-size:10.15px;color:#555;">Accessibility: Investigate</div>
<div class="a" style="left:1238.7px;top:802.5px;width:39px;height:21.7px;background:#d2d2d2;"></div>
<svg style="left:1251px;top:807px;" width="14" height="13" viewBox="0 0 14 13"><path d="M0.600 0.600h12.800v11.800h-12.800z M0.600 4.500h12.800 M0.600 8.500h12.800 M4.900 0.600v11.800 M9.200 0.600v11.800" fill="none" stroke="#444" stroke-width="1.100"/></svg>
<svg style="left:1291px;top:807px;" width="14" height="13" viewBox="0 0 14 13"><path d="M0.600 0.600h12.800v11.800h-12.800z M3.300 3h7.400v7h-7.400z M4.800 5h4.400 M4.800 6.800h4.400 M4.800 8.500h4.400" fill="none" stroke="#444" stroke-width="1"/></svg>
<svg style="left:1331px;top:806.5px;" width="14" height="13" viewBox="0 0 14 13"><path d="M0.600 0.600h12.800v11.800h-12.800z M4.300 0.600v6h5v-6" fill="none" stroke="#444" stroke-width="1.100"/></svg>
<div class="a" style="left:1364.5px;top:813.3px;width:7px;height:1.2px;background:#555;"></div>
<div class="a" style="left:1376px;top:813px;width:100.5px;height:1.6px;background:#9c9c9c;"></div>
<div class="a" style="left:1425.2px;top:808px;width:4.4px;height:11.5px;background:#3a3a3a;"></div>
<div class="a" style="left:1481px;top:813.3px;width:7.6px;height:1.2px;background:#555;"></div>
<div class="a" style="left:1484.2px;top:810px;width:1.2px;height:7.6px;background:#555;"></div>
<div class="t" style="left:1502.5px;top:807.3px;height:13px;line-height:13px;font-size:10px;color:#666;">100%</div>
<div class="a" style="left:0px;top:824.2px;width:1536px;height:39.8px;background:linear-gradient(90deg,#1e3440 0,#1d3142 35%,#1a2c46 70%,#17294a 100%);"></div>
<svg style="left:15.5px;top:836px;" width="17" height="16" viewBox="0 0 17 16"><path d="M0 2.200l6.800-0.950v6.250h-6.800z M7.800 1.100l8.700-1.100v7.500h-8.700z M0 8.500h6.800v6.250l-6.800-0.950z M7.800 8.500h8.700v7.500l-8.700-1.100z" fill="#fff"/></svg>
<svg style="left:63px;top:835.3px;" width="18" height="18" viewBox="0 0 18 18"><circle cx="8.800" cy="8.800" r="6.500" fill="none" stroke="#fff" stroke-width="2.300"/></svg>
<svg style="left:111px;top:836px;" width="18" height="16" viewBox="0 0 18 16"><path d="M1.500 3.500h9.500v9h-9.500z M1.500 0.800v2.700 M11 0.800v2.700 M1.500 12.500v2.700 M11 12.500v2.700 M15.200 0.800v5 M15.200 9v6.200" fill="none" stroke="#fff" stroke-width="1.400"/><circle cx="15.200" cy="7.500" r="0.900" fill="#fff"/></svg>
<svg style="left:159px;top:834px;" width="24" height="19" viewBox="0 0 24 19"><path d="M1 2q0-1.500 1.500-1.500h6l2 2.500h11q1.500 0 1.500 1.500v12.500q0 1.500-1.500 1.500h-19q-1.500 0-1.500-1.500z" fill="#f5b83d"/><path d="M1 6.500h22v10.500q0 1.500-1.500 1.500h-19q-1.500 0-1.500-1.500z" fill="#fcd364"/><path d="M6 12h12v6.500h-12z" fill="#2d82d8"/><path d="M8.500 14.500h7v4h-7z" fill="#fcd364"/></svg>
<div class="a" style="left:151px;top:862px;width:36px;height:2px;background:#78b7ee;"></div>
<div class="a" style="left:187px;top:862px;width:4.3px;height:2px;background:#4f7fae;"></div>
<svg style="left:208px;top:832px;" width="25" height="23" viewBox="0 0 25 23"><path d="M6.800 5.500v-2.700q0-1.800 1.800-1.800h8q1.800 0 1.800 1.800v2.700" fill="none" stroke="#4a9be8" stroke-width="1.400"/><defs><linearGradient id="sg" x1="0" y1="0" x2="0" y2="1"><stop offset="0.500" stop-color="#f6f6f6"/><stop offset="1" stop-color="#dfe8f3"/></linearGradient></defs><path d="M1 5.500h23v14q0 3-3 3h-17q-3 0-3-3z" fill="url(#sg)"/><path d="M8 9h4v4h-4z" fill="#f25022"/><path d="M13 9h4v4h-4z" fill="#7fba00"/><path d="M8 14h4v4h-4z" fill="#00a4ef"/><path d="M13 14h4v4h-4z" fill="#ffb900"/></svg>
<svg style="left:258px;top:831.7px;" width="25" height="25" viewBox="0 0 25 25"><defs><linearGradient id="eb" x1="0.1" y1="0" x2="0.6" y2="1"><stop offset="0" stop-color="#1fa4f4"/><stop offset=".45" stop-color="#0b72dc"/><stop offset="1" stop-color="#0843a4"/></linearGradient><linearGradient id="eg" x1="0" y1="0" x2="1" y2="0.300"><stop offset="0" stop-color="#16a0f0"/><stop offset=".5" stop-color="#12a5cf"/><stop offset=".8" stop-color="#3fae6c"/><stop offset="1" stop-color="#63b74e"/></linearGradient></defs><circle cx="12.300" cy="12.200" r="12.100" fill="url(#eb)"/><path d="M12.300 0.100a12.100 12.100 0 0 1 12.100 12.100q0 5-5.400 5q-5 0-5-2.700q1.500-1.500 0.500-4.500q-2.500-4-8.500-3.500q-3.500 1-5 3a12.100 12.100 0 0 1 11.300-9.400z" fill="url(#eg)"/><path d="M8.600 12q1-2.500 3.400-2.700q3 0.200 3 3.200q-0.500 2-1 2.500q0.500 2.500 5 2.200q3.500-0.200 5-2.200q-1.500 5-6 7.500q-6-1.500-8-4.500q-2-3-1.400-6z" fill="#1d3142"/></svg>
<div class="a" style="left:250.6px;top:862px;width:40.5px;height:2px;background:#78b7ee;"></div>
<svg style="left:307px;top:833.5px;" width="26" height="22" viewBox="0 0 26 22"><path d="M13 0.500l12 8.500h-24z" fill="#0a5bc4"/><path d="M1 9h24v12h-24z" fill="#1f8bef"/><path d="M1 9l12 9l12-9v-0.500l-12 6l-12-6z" fill="#fff"/><path d="M1 9l12 6.500l12-6.500v1l-12 8.500l-12-8.500z" fill="#e8f2ff"/></svg>
<svg style="left:361px;top:832.5px;" width="17" height="21" viewBox="0 0 17 21"><path d="M0.500 0.500h16v20h-16z" fill="#e8edf7" stroke="#b9c5dd" stroke-width=".8"/><path d="M2 2h13v3h-13z" fill="#f7a540"/><path d="M2 7h6v4h-6z" fill="#5f8fd8"/><path d="M9.500 7.500h5 M9.500 9.500h5 M2 13h12.500 M2 15h12.500 M2 17h12.500" stroke="#6f97d8" stroke-width="1"/></svg>
<div class="a" style="left:395px;top:824.2px;width:45.3px;height:39.8px;background:#3b4f5f;"></div>
<div class="a" style="left:440.3px;top:824.2px;width:3.5px;height:39.8px;background:#2a3e50;"></div>
<div class="a" style="left:395px;top:862px;width:45.3px;height:2px;background:#78b7ee;"></div>
<svg style="left:405px;top:832.5px;" width="27" height="24" viewBox="0 0 27 24"><path d="M8 0.500h17q1.500 0 1.500 1.500v20q0 1.500-1.500 1.500h-17q-1.500 0-1.500-1.500v-20q0-1.500 1.500-1.500z" fill="#1a8a57"/><path d="M16.500 0.500h8.500q1.500 0 1.500 1.500v4.500h-10z" fill="#2aa86c"/><path d="M6.500 6.500h10v5.500h-10z" fill="#107c41"/><path d="M16.500 6.500h10v5.500h-10z" fill="#1c9159"/><path d="M6.500 12h10v5.500h-10z" fill="#185c37"/><path d="M16.500 12h10v5.500h-10z" fill="#107c41"/><path d="M1.500 5.500h11q1.500 0 1.500 1.500v10.500q0 1.500-1.500 1.500h-11q-1.500 0-1.500-1.500v-10.500q0-1.500 1.500-1.500z" fill="#0e6a38"/><path d="M4 8.500l6 7.500 M10 8.500l-6 7.500" stroke="#fff" stroke-width="1.700"/></svg>
<svg style="left:457px;top:832px;" width="23" height="24" viewBox="0 0 23 24"><path d="M6 3h16v19h-16z" fill="#f2f4f8"/><path d="M1 0.500q6 1 8.500 6.500q2.500 6 8 11l3.500 3.500l-1 0.500l-4-3q-7-1-11-7.500q-3.500-6-4-11z" fill="#2f6fd6"/><path d="M1 0.500q5 4 7 9t9 9" fill="none" stroke="#9ec3ff" stroke-width=".8"/></svg>
<svg style="left:505.5px;top:832px;" width="25" height="25" viewBox="0 0 25 25"><path d="M3 0.500h19q2.500 0 2.500 2.500v19q0 2.500-2.500 2.500h-19q-2.500 0-2.500-2.500v-19q0-2.500 2.500-2.500z" fill="#528a12"/><path d="M3 0.500h19q2.500 0 2.500 2.500v9h-24v-9q0-2.500 2.500-2.500z" fill="#66a01c"/><path d="M19.500 5h-9.500q-4.500 0-4.500 4.500v6q0 4.500 4.500 4.500h9.500v-3.500h-8.500q-2 0-2-2v-4q0-2 2-2h8.500z" fill="#e9f6d2"/></svg>
<svg style="left:557px;top:832.5px;" width="24" height="24" viewBox="0 0 24 24"><circle cx="12" cy="12" r="8.300" fill="none" stroke="#d9dde2" stroke-width="4.200"/><path d="M12 3.700a8.300 8.300 0 0 1 8.300 8.300" fill="none" stroke="#f4531f" stroke-width="4.200"/><path d="M3.800 13.500a8.300 8.300 0 0 1 4-8.700" fill="none" stroke="#5b6670" stroke-width="4.200"/></svg>
<svg style="left:604px;top:832.5px;" width="26" height="24" viewBox="0 0 26 24"><path d="M8 1h15q2 0 2 2v17q0 2-2 2h-15z" fill="#1373d0"/><path d="M8 1h8.500v7h-8.500z" fill="#0a5bb5"/><path d="M16.500 1h6.500q2 0 2 2v5h-8.500z" fill="#35a3f2"/><path d="M16.500 8h8.500v7h-8.500z" fill="#1b86e0"/><path d="M9 15h16v5q0 2-2 2h-14z" fill="#0f62bf"/><path d="M1.500 6h11q1.500 0 1.500 1.500v10q0 1.500-1.500 1.500h-11q-1.500 0-1.500-1.500v-10q0-1.500 1.500-1.500z" fill="#0a63c9"/><circle cx="7" cy="12.500" r="2.800" fill="none" stroke="#fff" stroke-width="1.700"/></svg>
<svg style="left:655px;top:832.5px;" width="24" height="24" viewBox="0 0 24 24"><circle cx="12" cy="11.700" r="10.300" fill="#0d0d0d" stroke="#fff" stroke-width="1.700"/><circle cx="12" cy="11.700" r="6.600" fill="#ff4a1c"/></svg>
<div class="a" style="left:647px;top:862px;width:41.5px;height:2px;background:#78b7ee;"></div>
<svg style="left:1043px;top:835.2px;" width="27" height="17" viewBox="0 0 27 17"><path d="M7 16.500q-6 0-6-5q0-4.500 5-5q1.500-5.500 7.500-5.500q5.500 0 7 5q5.500 0.500 5.500 5.300q0 5.200-6 5.200z" fill="#c9ddf5"/><path d="M7 16.500q-6 0-6-5q0-2 1.200-3.300q4 5.300 12 4.300q7-1 9.500-5.500q2.300 1.500 2.300 4.300q0 5.200-6 5.200z" fill="#8fb8ea"/></svg>
<div class="t" style="left:1076.2px;top:835.3px;height:19px;line-height:19px;font-size:14.3px;color:#fff;letter-spacing:-0.413px;">27°C</div>
<div class="t" style="left:1114.5px;top:835.3px;height:19px;line-height:19px;font-size:14.3px;color:#fff;letter-spacing:-0.162px;">Có mây</div>
<svg style="left:1187px;top:838.5px;" width="14" height="9" viewBox="0 0 14 9"><path d="M1 8l6-6.300l6 6.300" fill="none" stroke="#fff" stroke-width="1.400"/></svg>
<svg style="left:1212px;top:836px;" width="14" height="17" viewBox="0 0 14 17"><path d="M2.500 4q4-2.500 8 0 M2.500 13.500q4 2.500 8 0" fill="none" stroke="#d8dde3" stroke-width="1"/><path d="M1 5.500h8v6.500h-8z M9 8l3.500-2v5.500l-3.500-2z" fill="none" stroke="#e8ecf0" stroke-width="1.100"/></svg>
<svg style="left:1232px;top:838px;" width="19" height="12" viewBox="0 0 19 12"><path d="M5 11.500q-4 0-4-3.500q0-3 3.300-3.300q1-4 5-4q3.800 0 4.700 3.500q4 0.300 4 3.700q0 3.600-4 3.600z" fill="#e4e8ee"/></svg>
<svg style="left:1260px;top:835.5px;" width="12" height="18" viewBox="0 0 12 18"><path d="M3.200 2.500q0-2 2.800-2t2.800 2v6.500q0 2-2.800 2t-2.800-2z" fill="#fff"/><path d="M1 8.500q0 4.500 5 4.500t5-4.500 M6 13v3 M3.500 16.300h5" fill="none" stroke="#cfd5dc" stroke-width="1.100"/></svg>
<svg style="left:1279px;top:838px;" width="19" height="12" viewBox="0 0 19 12"><path d="M4 1.500h12v9h-12z" fill="none" stroke="#fff" stroke-width="1.200"/><path d="M16.500 4h1.500v4h-1.500z" fill="#fff"/><path d="M4 1.500h4v9h-4z" fill="#fff"/><path d="M0.500 4h3 M0.500 7.500h3 M2 2.500v7" stroke="#fff" stroke-width="1"/></svg>
<svg style="left:1303px;top:836px;" width="17" height="16" viewBox="0 0 17 16"><path d="M1 15a13.500 13.500 0 0 1 13.500-13.500" fill="none" stroke="#cfd6de" stroke-width="1.200"/><path d="M4.500 15a10 10 0 0 1 10-10" fill="none" stroke="#cfd6de" stroke-width="1.200"/><path d="M8 15a6.500 6.500 0 0 1 6.500-6.500" fill="none" stroke="#fff" stroke-width="1.200"/><circle cx="13.500" cy="14" r="1.500" fill="#fff"/></svg>
<svg style="left:1328px;top:836px;" width="20" height="16" viewBox="0 0 20 16"><path d="M1 5.500h3l4-4v13l-4-4h-3z" fill="none" stroke="#fff" stroke-width="1.200" stroke-linejoin="round"/><path d="M11 5q2 3 0 6" fill="none" stroke="#e8ecf0" stroke-width="1.100"/><path d="M13.500 3q3.500 5 0 10" fill="none" stroke="#aab4c0" stroke-width="1"/><path d="M16 1.500q4.500 6.500 0 13" fill="none" stroke="#7d8997" stroke-width="1"/></svg>
<div class="a" style="left:1355px;top:819.500px;width:190px;height:60px;border-radius:26px;background:#172a4b"></div>
<div class="t" style="left:1367px;top:831.7px;height:27px;line-height:27px;font-size:21px;color:#fff;font-weight:200;letter-spacing:-0.357px;font-family:'DejaVu Sans','Liberation Sans',sans-serif;-webkit-text-stroke:0.600px #fff;">0984.24.23.27</div>
<div class="a" style="left:969.500px;top:137.600px;width:360px;height:194.500px;background:#fff;border:1px solid #c6c6c6;box-shadow:0 2px 5px rgba(0,0,0,.28)"></div>
<div class="a" style="left:970.5px;top:138.6px;width:358px;height:63.5px;background:#d2d0ce;"></div>
<div class="a" style="left:1031px;top:159.500px;width:38px;height:38px;border-radius:50%;background:radial-gradient(circle,rgba(236,214,100,.7) 0,rgba(236,214,100,.6) 50%,rgba(236,214,100,.3) 62%,rgba(238,214,92,0) 72%)"></div>
<div class="t" style="left:1023.4px;top:146.0px;height:15px;line-height:15px;font-size:11.8px;color:#1b1b1b;font-weight:bold;letter-spacing:-0.064px;">So sánh 2 cột dữ liệu và Tô mầu giá trị Trùng nhau</div>
<div class="t" style="left:1023.4px;top:164.8px;height:16px;line-height:16px;font-size:12px;color:#484848;letter-spacing:-0.022px;">Select 2 cột cần tìm giá trị trùng nhau</div>
<div class="t" style="left:1024.2px;top:180.6px;height:16px;line-height:16px;font-size:12px;color:#484848;letter-spacing:-0.095px;">(2 cột không cần có cùng số hàng)</div>
<div class="t" style="left:1023.4px;top:210.0px;height:15px;line-height:15px;font-size:11.8px;color:#1b1b1b;font-weight:bold;letter-spacing:-0.051px;">So sánh 2 cột dữ liệu và Tô mầu giá trị Duy nhất</div>
<div class="t" style="left:1023.4px;top:228.8px;height:16px;line-height:16px;font-size:12px;color:#484848;letter-spacing:-0.012px;">Select 2 cột cần tìm giá trị duy nhất</div>
<div class="t" style="left:1024.2px;top:244.6px;height:16px;line-height:16px;font-size:12px;color:#484848;letter-spacing:-0.095px;">(2 cột không cần có cùng số hàng)</div>
<div class="t" style="left:1023.4px;top:274.0px;height:15px;line-height:15px;font-size:11.8px;color:#1b1b1b;font-weight:bold;letter-spacing:-0.094px;">So sánh 2 bảng dữ liệu và Tô mầu giá trị Khác biệt</div>
<div class="t" style="left:1023.4px;top:292.8px;height:16px;line-height:16px;font-size:12px;color:#484848;letter-spacing:-0.213px;">Select 2 Bảng dữ liệu cần so sánh</div>
<div class="t" style="left:1024.2px;top:308.6px;height:16px;line-height:16px;font-size:12px;color:#484848;letter-spacing:-0.020px;">(2 bảng phải có số hàng số cột giống nhau)</div>
<svg style="left:984px;top:145px;" width="33" height="33" viewBox="0 0 33 33"><path d="M2.400 0.600h27.200q2 0 2 2v27.300q0 2-2 2h-27.200q-2 0-2-2v-27.300q0-2 2-2z" fill="#fdfdfd" stroke="#8c8c8c" stroke-width=".9"/><path d="M0.400 26.200h31.200v3.700q0 2-2 2h-27.200q-2 0-2-2z" fill="#505050"/><path d="M4.900 4.800h8.300v13.200h-8.300z M18.800 4.800h8.300v13.200h-8.300z" fill="#4c4c4c"/><path d="M5.500 7.300h7 M5.500 9.800h7 M5.500 12.300h4.500 M19.500 7.300h7 M19.500 9.800h7 M19.500 12.300h7 M20.500 14.800h6" stroke="#a9a9a9" stroke-width=".9"/><path d="M7.300 18.700v1.500q0 2 2 2h13.700q2 0 2-2v-1.500" fill="none" stroke="#444" stroke-width="1.700"/><path d="M9.500 29.200h13" stroke="#9a9a9a" stroke-width="1"/></svg>
<svg style="left:984px;top:211px;" width="33" height="30" viewBox="0 0 33 30"><path d="M1.500 1.500h11v24h-11z" fill="#fff" stroke="#2b8cf0" stroke-width="2"/><path d="M19 10.500h11.500v15h-11.500z" fill="#3d9cf5" stroke="#2b8cf0" stroke-width="1.500"/></svg>
<div class="t" style="left:987px;top:270.0px;height:40px;line-height:40px;font-size:33px;color:#000;font-weight:bold;font-family:'DejaVu Sans','Liberation Sans',sans-serif;">≠</div>
<svg style="left:1051.8px;top:170.8px;" width="12" height="19" viewBox="0 0 12 19"><path d="M0.600 0.600v14l3.300-3.100l2.400 5.500l2.100-0.950l-2.400-5.350h4.400z" fill="#fff" stroke="#222" stroke-width=".9" stroke-linejoin="round"/></svg>
</body></html>
